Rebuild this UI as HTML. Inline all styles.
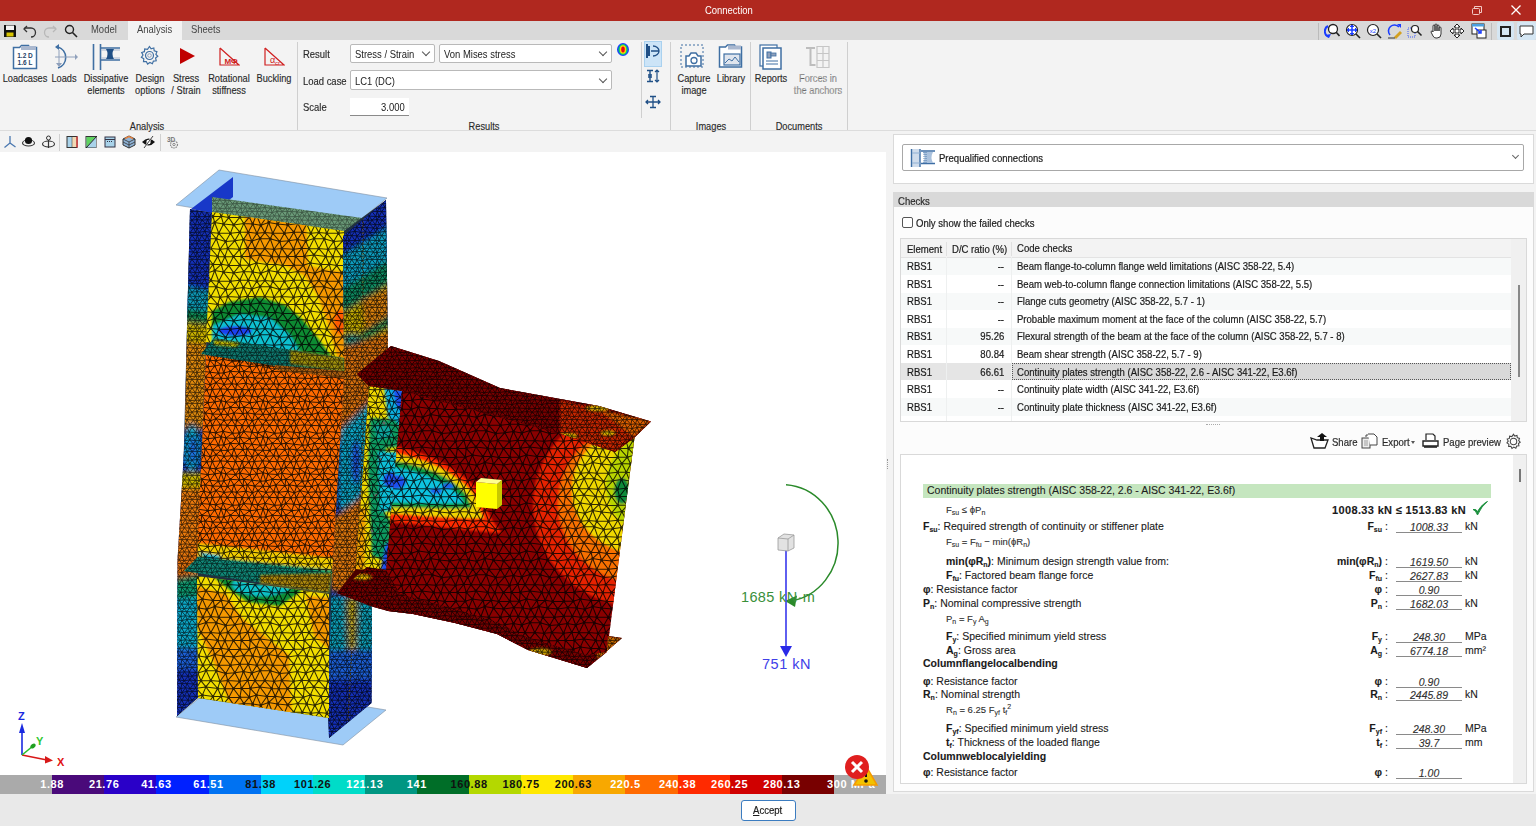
<!DOCTYPE html>
<html><head><meta charset="utf-8">
<style>
*{margin:0;padding:0;box-sizing:border-box}
html,body{width:1536px;height:826px;overflow:hidden;background:#f3f3f3;font-family:"Liberation Sans",sans-serif;font-size:10px;color:#333}
.a{position:absolute}
.t{position:absolute;white-space:nowrap;line-height:1}
#title{left:0;top:0;width:1536px;height:21px;background:#b0281f}
#tabs{left:0;top:21px;width:1536px;height:19px;background:#d9d9d9}
#ribbon{left:0;top:40px;width:1536px;height:91px;background:#f3f3f3;border-bottom:1px solid #dcdcdc}
#tb2{left:0;top:132px;width:886px;height:20px;background:#f3f3f3}
#view{left:0;top:152px;width:886px;height:623px;background:#fff;overflow:hidden}
#legend{left:0;top:775px;width:886px;height:19px;background:#aaa}
#bottom{left:0;top:794px;width:1536px;height:32px;background:#e9e9e9}
.sep{position:absolute;width:1px;background:#cfcfcf}
.lbl{color:#2a2a2a;font-size:10.5px;-webkit-text-stroke:.15px #2a2a2a}
.c{transform:translateX(-50%) scaleX(.88)}
.tx{font-size:10.5px;color:#1a1a1a;-webkit-text-stroke:.2px #1a1a1a;transform:scaleX(.91);transform-origin:0 0}
.lg{top:4px;font-size:11px;font-weight:bold;letter-spacing:.6px;transform:translateX(-50%)}
.rp{font-size:10.5px;color:#1a1a1a;line-height:12px;-webkit-text-stroke:.1px #1a1a1a}
.rp sub{font-size:7px;vertical-align:-2px;line-height:0}
.rp sup{font-size:7px;vertical-align:4px;line-height:0}
.rp.b,.rp b{font-weight:bold}
.rp.i{font-style:italic;color:#333}
.rp.f{font-size:9.5px;color:#333}
.s{transform:scaleX(.9);transform-origin:0 0}
.combo{position:absolute;background:#fff;border:1px solid #b9b9b9;border-radius:2px}
.chev{position:absolute;width:6px;height:6px;border-right:1px solid #555;border-bottom:1px solid #555;transform:rotate(45deg)}
</style></head><body>
<div id="title" class="a"><div class="t s" style="left:705px;top:5px;color:#fff;font-size:10.5px">Connection</div>
<svg class="a" style="left:1470px;top:4px" width="14" height="12"><rect x="2.5" y="4.5" width="7" height="6" rx="1" fill="none" stroke="#f3c9c5" stroke-width="1"/><path d="M4.5 4.5V2.5h7v6h-2" fill="none" stroke="#f3c9c5"/></svg>
<svg class="a" style="left:1510px;top:4px" width="13" height="12"><path d="M1.5 1.5l9 9M10.5 1.5l-9 9" stroke="#fff" stroke-width="1.3"/></svg>
</div>
<div id="tabs" class="a">
 <div class="a" style="left:128px;top:0;width:54px;height:19px;background:#f3f3f3"></div>
 <div class="t s" style="left:91px;top:3px;font-size:10.5px;color:#444">Model</div>
 <div class="t s" style="left:137px;top:3px;font-size:10.5px;color:#444">Analysis</div>
 <div class="t s" style="left:191px;top:3px;font-size:10.5px;color:#444">Sheets</div>

 <svg class="a" style="left:3px;top:3px" width="14" height="14" viewBox="0 0 14 14"><path d="M1 1h11l1 1v11H1z" fill="#111"/><rect x="3" y="1.5" width="8" height="4.5" fill="#f4f4f4"/><rect x="3.5" y="8.5" width="7" height="4" fill="#d8c400"/></svg>
 <svg class="a" style="left:23px;top:3px" width="14" height="14" viewBox="0 0 14 14"><path d="M4 2L1 5l3 3" fill="none" stroke="#333" stroke-width="1.3"/><path d="M1.5 5H8a4.5 4.5 0 0 1 0 9" fill="none" stroke="#333" stroke-width="1.3" transform="translate(0,-1)"/></svg>
 <svg class="a" style="left:43px;top:3px" width="14" height="14" viewBox="0 0 14 14"><path d="M10 2l3 3-3 3" fill="none" stroke="#b8b8b8" stroke-width="1.3"/><path d="M12.5 5H6a4.5 4.5 0 0 0 0 9" fill="none" stroke="#b8b8b8" stroke-width="1.3" transform="translate(0,-1)"/></svg>
 <svg class="a" style="left:64px;top:3px" width="14" height="14" viewBox="0 0 14 14"><circle cx="5.5" cy="5.5" r="4" fill="none" stroke="#222" stroke-width="1.4"/><path d="M8.5 8.5l4.5 4.5" stroke="#222" stroke-width="1.6"/></svg>
 <div class="sep" style="left:1318px;top:2px;height:17px;background:#bbb"></div>
 <svg class="a" style="left:1324px;top:2px" width="16" height="16" viewBox="0 0 16 16"><circle cx="9" cy="6" r="4.5" fill="#fff" stroke="#222" stroke-width="1.3"/><path d="M12 9l3.5 4" stroke="#222" stroke-width="1.6"/><path d="M4 3a6 6 0 0 0 1 11" fill="none" stroke="#1a3cff" stroke-width="2"/><path d="M1 12l4 3 2-4z" fill="#1a3cff"/></svg>
 <svg class="a" style="left:1345px;top:2px" width="16" height="16" viewBox="0 0 16 16"><circle cx="7" cy="7" r="5.5" fill="#fff" stroke="#222" stroke-width="1.2"/><path d="M7 2.5v9M2.5 7h9" stroke="#1a3cff" stroke-width="1.5"/><path d="M5 4l2-2 2 2M5 10l2 2 2-2M4 5l-2 2 2 2M10 5l2 2-2 2" fill="#1a3cff" stroke="#1a3cff"/><path d="M11 11l4 4" stroke="#222" stroke-width="1.6"/></svg>
 <svg class="a" style="left:1366px;top:2px" width="16" height="16" viewBox="0 0 16 16"><circle cx="7" cy="7" r="5.5" fill="#fff" stroke="#222" stroke-width="1.2"/><text x="7" y="9.5" font-size="6" fill="#1a3cff" text-anchor="middle" font-family="Liberation Sans">x2</text><path d="M11 11l4 4" stroke="#222" stroke-width="1.6"/></svg>
 <svg class="a" style="left:1387px;top:2px" width="16" height="16" viewBox="0 0 16 16"><path d="M3 12a6 6 0 1 1 9-8" fill="none" stroke="#1a3cff" stroke-width="1.6"/><path d="M10 1h4v4z" fill="#1a3cff"/><path d="M7 14l6-6 2 2-6 6z" fill="#d4a020"/><path d="M1 15h7" stroke="#333"/></svg>
 <svg class="a" style="left:1407px;top:2px" width="16" height="16" viewBox="0 0 16 16"><rect x="1" y="5" width="7" height="9" fill="none" stroke="#1a3cff" stroke-width=".8" stroke-dasharray="1 1"/><circle cx="8" cy="6" r="3.5" fill="#fff" stroke="#222" stroke-width="1.2"/><path d="M10.5 8.5l4 4" stroke="#222" stroke-width="1.6"/></svg>
 <svg class="a" style="left:1429px;top:2px" width="15" height="16" viewBox="0 0 15 16"><path d="M4 9V3a1 1 0 0 1 2 0v5V2a1 1 0 0 1 2 0v6V3a1 1 0 0 1 2 0v5V5a1 1 0 0 1 2 0v6q0 4-4 4H7q-2 0-3-2L2 9a1 1 0 0 1 2 0z" fill="#fff" stroke="#222" stroke-width=".9"/></svg>
 <svg class="a" style="left:1449px;top:2px" width="16" height="16" viewBox="0 0 16 16"><path d="M8 1l3 3H9v3h3V5l3 3-3 3V9H9v3h2l-3 3-3-3h2V9H4v2L1 8l3-3v2h3V4H5z" fill="#fff" stroke="#222" stroke-width="1"/></svg>
 <svg class="a" style="left:1471px;top:2px" width="16" height="16" viewBox="0 0 16 16"><rect x="1" y="1" width="12" height="10" fill="#fff" stroke="#222"/><rect x="1" y="1" width="12" height="2.5" fill="#4aa0e0"/><rect x="6" y="7" width="9" height="8" fill="#fff" stroke="#222"/><path d="M4 5l6 5M10 7v3H7" fill="none" stroke="#1a3cff" stroke-width="1.5"/></svg>
 <div class="sep" style="left:1491px;top:2px;height:17px;background:#bbb"></div>
 <div class="a" style="left:1497px;top:1px;width:17px;height:18px;background:#d5e6f3;border-radius:2px"></div>
 <div class="a" style="left:1500px;top:5px;width:11px;height:11px;border:2px solid #222"></div>
 <div class="a" style="left:1517px;top:1px;width:19px;height:18px;background:#d5e6f3;border-radius:2px"></div>
 <svg class="a" style="left:1519px;top:4px" width="15" height="13" viewBox="0 0 15 13"><path d="M1 1h13v8H5l-3 3V9H1z" fill="#fff" stroke="#333"/></svg>
</div>
<div id="ribbon" class="a">
 <!-- Analysis group -->
 <svg class="a" style="left:12px;top:4px" width="26" height="26" viewBox="0 0 26 26">
  <path d="M1.5 3.5h6l2 -2h7l1 2h7v21h-23z" fill="#fff" stroke="#3f6fa3" stroke-width="1.5"/>
  <rect x="9" y="2" width="15" height="4" fill="#aab8cf"/>
  <text x="13" y="14" font-size="6.5" font-weight="bold" fill="#1f3f66" text-anchor="middle" font-family="Liberation Sans">1.2 D</text>
  <text x="13" y="21" font-size="6.5" font-weight="bold" fill="#1f3f66" text-anchor="middle" font-family="Liberation Sans">1.6 L</text>
 </svg>
 <div class="t lbl c" style="left:25px;top:33px">Loadcases</div>
 <svg class="a" style="left:54px;top:4px" width="24" height="26" viewBox="0 0 24 26">
  <path d="M4 3a11 11 0 0 1 0 21" fill="none" stroke="#3f6fa3" stroke-width="1.6"/>
  <path d="M1 3l4-3v6z" fill="#3f6fa3"/>
  <path d="M1 13h20M5 6v14" stroke="#8fa0bb" stroke-width="1"/>
  <path d="M21 10l3 3-3 3z" fill="#8fa0bb"/><path d="M2 19h6l-3 4z" fill="#8fa0bb"/>
 </svg>
 <div class="t lbl c" style="left:64.4px;top:33px">Loads</div>
 <svg class="a" style="left:92px;top:3px" width="28" height="28" viewBox="0 0 28 28">
  <path d="M1.5 1v26M8.5 1v26" stroke="#3f6fa3" stroke-width="1.6"/>
  <path d="M9 5h19M9 17h19" stroke="#3f6fa3" stroke-width="1.6"/>
  <path d="M9 7h19M9 15h19" stroke="#aab8cf" stroke-width="1"/>
  <path d="M14 6q3 5 0 10h8q-3-5 0-10z" fill="#1f4f86"/>
 </svg>
 <div class="t lbl c" style="left:105.8px;top:33px">Dissipative</div>
 <div class="t lbl c" style="left:105.8px;top:45px">elements</div>
 <svg class="a" style="left:139px;top:5px" width="21" height="21" viewBox="0 0 21 21">
  <path d="M10.5 1.5l1.6 2.3 2.7-.8.4 2.8 2.7.9-1 2.6 1.9 2-2.2 1.7.6 2.8-2.8.3-1 2.6-2.5-1.3-2.3 1.6-1.3-2.5-2.8.1.3-2.8-2.4-1.5 1.6-2.3-1.3-2.5 2.7-.8.3-2.8 2.8.5z" fill="none" stroke="#3f6fa3" stroke-width="1.2"/>
  <circle cx="10.5" cy="10.5" r="4" fill="none" stroke="#3f6fa3" stroke-width="1.2"/>
  <circle cx="10.5" cy="10.5" r="1.8" fill="none" stroke="#8fa0bb" stroke-width="1"/>
 </svg>
 <div class="t lbl c" style="left:149.7px;top:33px">Design</div>
 <div class="t lbl c" style="left:149.7px;top:45px">options</div>
 <svg class="a" style="left:178px;top:7px" width="18" height="18" viewBox="0 0 18 18"><path d="M2 1l15 8-15 8z" fill="#c00000"/></svg>
 <div class="t lbl c" style="left:186.3px;top:33px">Stress</div>
 <div class="t lbl c" style="left:186.3px;top:45px">/ Strain</div>
 <svg class="a" style="left:218px;top:6px" width="22" height="22" viewBox="0 0 22 22">
  <path d="M2 2v17h19L2 2" fill="none" stroke="#d02020" stroke-width="1.2"/>
  <text x="13" y="18" font-size="8" font-weight="bold" fill="#d02020" text-anchor="middle" font-family="Liberation Sans">MΦ</text>
 </svg>
 <div class="t lbl c" style="left:228.7px;top:33px">Rotational</div>
 <div class="t lbl c" style="left:228.7px;top:45px">stiffness</div>
 <svg class="a" style="left:263px;top:6px" width="22" height="22" viewBox="0 0 22 22">
  <path d="M2 2v17h19L2 2" fill="none" stroke="#d02020" stroke-width="1.2"/>
  <text x="12" y="17" font-size="9" fill="#d02020" text-anchor="middle" font-family="Liberation Sans">α<tspan font-size="6" dy="2">cr</tspan></text>
 </svg>
 <div class="t lbl c" style="left:274.4px;top:33px">Buckling</div>
 <div class="t lbl c" style="left:147.3px;top:81px">Analysis</div>
 <div class="sep" style="left:297px;top:2px;height:88px"></div>
 <!-- Results group -->
 <div class="t lbl s" style="left:303px;top:9px">Result</div>
 <div class="combo" style="left:350px;top:4px;width:85px;height:19px"><div class="t s" style="left:4px;top:4px;color:#222;font-size:10.5px">Stress / Strain</div><div class="chev" style="left:72px;top:4px"></div></div>
 <div class="combo" style="left:439px;top:4px;width:173px;height:19px"><div class="t s" style="left:4px;top:4px;color:#222;font-size:10.5px">Von Mises stress</div><div class="chev" style="left:160px;top:4px"></div></div>
 <svg class="a" style="left:617px;top:3px" width="12" height="13" viewBox="0 0 12 13"><ellipse cx="6" cy="6.5" rx="6" ry="6.5" fill="#1e3cff"/><ellipse cx="6" cy="6.5" rx="4.6" ry="5.4" fill="#00d26a"/><ellipse cx="6" cy="6.5" rx="3.2" ry="4.2" fill="#ffd800"/><ellipse cx="6" cy="6.5" rx="1.8" ry="3" fill="#e8001c"/></svg>
 <div class="t lbl s" style="left:303px;top:36px">Load case</div>
 <div class="combo" style="left:350px;top:30px;width:262px;height:20px"><div class="t s" style="left:4px;top:5px;color:#222;font-size:10.5px">LC1 (DC)</div><div class="chev" style="left:249px;top:5px"></div></div>
 <div class="t lbl s" style="left:303px;top:62px">Scale</div>
 <div class="a" style="left:350px;top:58px;width:59px;height:18px;background:#fff;border-bottom:1px solid #8a8a8a"></div>
 <div class="t s" style="left:381px;top:62px;color:#222;font-size:10.5px">3.000</div>
 <div class="t lbl c" style="left:484px;top:81px">Results</div>
 <div class="sep" style="left:641px;top:2px;height:76px"></div>
 <div class="a" style="left:644px;top:1px;width:18px;height:26px;background:#cce4f7;border:1px solid #a9d1ef"></div>
 <svg class="a" style="left:645px;top:3px" width="16" height="16" viewBox="0 0 16 16"><path d="M2 1v14M4 3v10" stroke="#1f4f86" stroke-width="2"/><path d="M6 8h8M8 3a6 5 0 0 1 0 10" fill="none" stroke="#1f4f86" stroke-width="1.3"/></svg>
 <svg class="a" style="left:645px;top:29px" width="16" height="14" viewBox="0 0 16 14"><path d="M2 1.5h6M2 12.5h6M5 1.5v11M3 6h4M3 8h4" stroke="#1f4f86" stroke-width="1.4" fill="none"/><path d="M12 1v12M10 3l2-2 2 2M10 11l2 2 2-2" stroke="#1f4f86" stroke-width="1.2" fill="none"/></svg>
 <svg class="a" style="left:645px;top:55px" width="16" height="14" viewBox="0 0 16 14"><path d="M5 1.5h6M5 12.5h6M8 1.5v11M1 7h14M3 5l-2 2 2 2M13 5l2 2-2 2" stroke="#1f4f86" stroke-width="1.3" fill="none"/></svg>
 <div class="sep" style="left:670px;top:2px;height:88px"></div>
 <!-- Images -->
 <svg class="a" style="left:680px;top:4px" width="26" height="25" viewBox="0 0 26 25">
  <rect x="1" y="1" width="22" height="22" fill="none" stroke="#3f6fa3" stroke-dasharray="2 2"/>
  <path d="M6 12h3l2-3h5l2 3h3v10H6z" fill="#fff" stroke="#3f6fa3" stroke-width="1.5"/><circle cx="14" cy="16.5" r="3" fill="none" stroke="#3f6fa3" stroke-width="1.3"/>
 </svg>
 <div class="t lbl c" style="left:693.5px;top:33px">Capture</div>
 <div class="t lbl c" style="left:693.5px;top:45px">image</div>
 <svg class="a" style="left:718px;top:4px" width="26" height="25" viewBox="0 0 26 25">
  <path d="M1.5 3h6l2-2h7l1 2h6v20h-22z" fill="#fff" stroke="#3f6fa3" stroke-width="1.5"/>
  <rect x="10" y="1.5" width="13" height="4" fill="#aab8cf"/>
  <rect x="6" y="10" width="16" height="11" fill="#dfe5ee" stroke="#3f6fa3" stroke-width="1.2"/><path d="M7 19l4-4 3 2 3-4 4 5" fill="none" stroke="#3f6fa3"/>
 </svg>
 <div class="t lbl c" style="left:730.5px;top:33px">Library</div>
 <div class="t lbl c" style="left:710.5px;top:81px">Images</div>
 <div class="sep" style="left:750px;top:2px;height:88px"></div>
 <svg class="a" style="left:759px;top:4px" width="24" height="26" viewBox="0 0 24 26">
  <rect x="1" y="1" width="17" height="21" fill="#fff" stroke="#3f6fa3" stroke-width="1.2"/>
  <rect x="4" y="4" width="18" height="21" fill="#fff" stroke="#3f6fa3" stroke-width="1.5"/>
  <rect x="8" y="8" width="4" height="6" fill="#8fa0bb" stroke="#3f6fa3"/><rect x="12" y="9" width="5" height="3" fill="#8fa0bb" stroke="#3f6fa3" stroke-width=".8"/>
  <path d="M7 17h12M7 20h12" stroke="#3f6fa3"/>
 </svg>
 <div class="t lbl c" style="left:771px;top:33px">Reports</div>
 <svg class="a" style="left:805px;top:5px" width="26" height="24" viewBox="0 0 26 24">
  <path d="M1 3h9M5.5 3v17h5" fill="none" stroke="#bdbdbd" stroke-width="2"/>
  <path d="M12 1.5h12v21H12zM12 8.5h12M12 15.5h12M18 1.5v21" fill="none" stroke="#c6c6c6" stroke-width="1.2"/>
 </svg>
 <div class="t lbl c" style="left:817.5px;top:33px;color:#a8a8a8">Forces in</div>
 <div class="t lbl c" style="left:817.5px;top:45px;color:#a8a8a8">the anchors</div>
 <div class="t lbl c" style="left:798.5px;top:81px">Documents</div>
 <div class="sep" style="left:847px;top:2px;height:88px"></div>
</div>
<div id="tb2" class="a">
 <svg class="a" style="left:3px;top:3px" width="14" height="14" viewBox="0 0 14 14"><path d="M7 1v7L1.5 12.5M7 8l5.5 4" fill="none" stroke="#4a78b0" stroke-width="1.3"/></svg>
 <svg class="a" style="left:21px;top:3px" width="15" height="14" viewBox="0 0 15 14"><ellipse cx="7.5" cy="8" rx="6" ry="3" fill="none" stroke="#333" stroke-width="1.1"/><circle cx="7.5" cy="5.5" r="3.6" fill="#111"/></svg>
 <svg class="a" style="left:41px;top:3px" width="15" height="14" viewBox="0 0 15 14"><ellipse cx="7.5" cy="9" rx="6" ry="3" fill="none" stroke="#333" stroke-width="1.1"/><circle cx="7.5" cy="3" r="2" fill="none" stroke="#333"/><path d="M7.5 5v8" stroke="#333" stroke-width="1.2"/></svg>
 <div class="sep" style="left:59px;top:2px;height:17px;background:#d0d0d0"></div>
 <svg class="a" style="left:66px;top:3px" width="12" height="14" viewBox="0 0 12 14"><rect x="1" y="1.5" width="10" height="11" fill="#a9d3ea" stroke="#333"/><rect x="6" y="2" width="4.5" height="10" fill="#f0d9b5"/><path d="M11 1.5v11" stroke="#e02020" stroke-width="1.2"/><path d="M6 1.5v11" stroke="#333" stroke-dasharray="1 1"/></svg>
 <svg class="a" style="left:85px;top:3px" width="12" height="14" viewBox="0 0 12 14"><rect x="1" y="1.5" width="10" height="11" fill="#a9d3ea" stroke="#333"/><path d="M1.5 12.5L11 2v10.5z" fill="#a9d3ea"/><path d="M1.5 2v10L10.5 2z" fill="#5fd35f"/><path d="M1 13L12 1" stroke="#222" stroke-width="1"/></svg>
 <svg class="a" style="left:104px;top:3px" width="12" height="14" viewBox="0 0 12 14"><rect x="1" y="2" width="10" height="10" fill="#a9d3ea" stroke="#334"/><path d="M1 4.5h10" stroke="#334"/><path d="M3 6.5h6" stroke="#334" stroke-dasharray="1 1"/></svg>
 <svg class="a" style="left:122px;top:3px" width="14" height="14" viewBox="0 0 14 14"><path d="M7 1l6 3v6l-6 3-6-3V4z" fill="#8fb3d6" stroke="#333"/><path d="M1 4l6 3 6-3M7 7v6M1 7l6 3 6-3" fill="none" stroke="#333" stroke-width=".8"/><path d="M3 3.5l4-2 4 2" stroke="#e08040" stroke-width="1.5" fill="none"/></svg>
 <svg class="a" style="left:141px;top:3px" width="15" height="14" viewBox="0 0 15 14"><path d="M1 7q6.5-7 13 0q-6.5 7-13 0z" fill="#111"/><circle cx="7.5" cy="7" r="2.2" fill="#fff"/><path d="M3 13L12 1" stroke="#f3f3f3" stroke-width="1.5"/><path d="M3 13L12 1" stroke="#111" stroke-width=".8"/></svg>
 <div class="sep" style="left:160px;top:2px;height:17px;background:#d0d0d0"></div>
 <svg class="a" style="left:166px;top:3px" width="14" height="14" viewBox="0 0 14 14"><text x="1" y="6.5" font-size="6.5" font-weight="bold" fill="#777" font-family="Liberation Sans">3D</text><circle cx="8" cy="9.5" r="3.5" fill="none" stroke="#888" stroke-width="1.2" stroke-dasharray="1.5 .8"/><circle cx="8" cy="9.5" r="1.2" fill="none" stroke="#888"/></svg>
</div>
<div id="view" class="a"></div>
<!--MODEL--><svg class="a" style="left:0;top:152px" width="886" height="623" viewBox="0 152 886 623"><defs>
 <pattern id="mesh" width="42" height="36" patternUnits="userSpaceOnUse"><path d="M-3.3 -6.1L2.3 -6.5M-3.3 -6.1L-8.2 -0.4M-3.3 -6.1L-0.1 0.2M2.3 -6.5L10.6 -7.1M2.3 -6.5L-0.1 0.2M2.3 -6.5L5.8 0.8M10.6 -7.1L17.4 -6.6M10.6 -7.1L5.8 0.8M10.6 -7.1L13.1 -0.7M17.4 -6.6L25.5 -6.3M17.4 -6.6L13.1 -0.7M17.4 -6.6L22.5 1.3M25.5 -6.3L32.3 -6.6M25.5 -6.3L22.5 1.3M25.5 -6.3L29.4 0.9M32.3 -6.6L38.7 -6.1M32.3 -6.6L29.4 0.9M32.3 -6.6L33.8 -0.4M38.7 -6.1L44.3 -6.5M38.7 -6.1L33.8 -0.4M38.7 -6.1L41.9 0.2M44.3 -6.5L52.6 -7.1M44.3 -6.5L41.9 0.2M44.3 -6.5L47.8 0.8M-8.2 -0.4L-0.1 0.2M-8.2 -0.4L-2.1 6.7M-8.2 -0.4L-12.0 5.2M-0.1 0.2L5.8 0.8M-0.1 0.2L4.8 5.9M-0.1 0.2L-2.1 6.7M5.8 0.8L13.1 -0.7M5.8 0.8L11.1 4.8M5.8 0.8L4.8 5.9M13.1 -0.7L22.5 1.3M13.1 -0.7L16.1 5.9M13.1 -0.7L11.1 4.8M22.5 1.3L29.4 0.9M22.5 1.3L25.5 6.5M22.5 1.3L16.1 5.9M29.4 0.9L33.8 -0.4M29.4 0.9L30.0 5.2M29.4 0.9L25.5 6.5M33.8 -0.4L41.9 0.2M33.8 -0.4L39.9 6.7M33.8 -0.4L30.0 5.2M41.9 0.2L47.8 0.8M41.9 0.2L46.8 5.9M41.9 0.2L39.9 6.7M-2.1 6.7L4.8 5.9M-2.1 6.7L-8.1 11.3M-2.1 6.7L0.0 12.2M4.8 5.9L11.1 4.8M4.8 5.9L0.0 12.2M4.8 5.9L8.4 13.2M11.1 4.8L16.1 5.9M11.1 4.8L8.4 13.2M11.1 4.8L13.8 12.9M16.1 5.9L25.5 6.5M16.1 5.9L13.8 12.9M16.1 5.9L20.4 11.3M25.5 6.5L30.0 5.2M25.5 6.5L20.4 11.3M25.5 6.5L29.2 11.9M30.0 5.2L39.9 6.7M30.0 5.2L29.2 11.9M30.0 5.2L33.9 11.3M39.9 6.7L46.8 5.9M39.9 6.7L33.9 11.3M39.9 6.7L42.0 12.2M46.8 5.9L53.1 4.8M46.8 5.9L42.0 12.2M46.8 5.9L50.4 13.2M-8.1 11.3L0.0 12.2M-8.1 11.3L-4.7 16.9M-8.1 11.3L-9.1 17.7M0.0 12.2L8.4 13.2M0.0 12.2L2.6 18.0M0.0 12.2L-4.7 16.9M8.4 13.2L13.8 12.9M8.4 13.2L11.0 18.3M8.4 13.2L2.6 18.0M13.8 12.9L20.4 11.3M13.8 12.9L17.6 18.4M13.8 12.9L11.0 18.3M20.4 11.3L29.2 11.9M20.4 11.3L23.9 16.9M20.4 11.3L17.6 18.4M29.2 11.9L33.9 11.3M29.2 11.9L32.9 17.7M29.2 11.9L23.9 16.9M33.9 11.3L42.0 12.2M33.9 11.3L37.3 16.9M33.9 11.3L32.9 17.7M42.0 12.2L50.4 13.2M42.0 12.2L44.6 18.0M42.0 12.2L37.3 16.9M-4.7 16.9L2.6 18.0M-4.7 16.9L-6.1 23.2M-4.7 16.9L0.4 24.8M2.6 18.0L11.0 18.3M2.6 18.0L0.4 24.8M2.6 18.0L6.0 22.7M11.0 18.3L17.6 18.4M11.0 18.3L6.0 22.7M11.0 18.3L14.0 24.4M17.6 18.4L23.9 16.9M17.6 18.4L14.0 24.4M17.6 18.4L21.8 23.7M23.9 16.9L32.9 17.7M23.9 16.9L21.8 23.7M23.9 16.9L26.7 24.3M32.9 17.7L37.3 16.9M32.9 17.7L26.7 24.3M32.9 17.7L35.9 23.2M37.3 16.9L44.6 18.0M37.3 16.9L35.9 23.2M37.3 16.9L42.4 24.8M44.6 18.0L53.0 18.3M44.6 18.0L42.4 24.8M44.6 18.0L48.0 22.7M-6.1 23.2L0.4 24.8M-6.1 23.2L-3.3 29.9M-6.1 23.2L-9.7 29.4M0.4 24.8L6.0 22.7M0.4 24.8L2.3 29.5M0.4 24.8L-3.3 29.9M6.0 22.7L14.0 24.4M6.0 22.7L10.6 28.9M6.0 22.7L2.3 29.5M14.0 24.4L21.8 23.7M14.0 24.4L17.4 29.4M14.0 24.4L10.6 28.9M21.8 23.7L26.7 24.3M21.8 23.7L25.5 29.7M21.8 23.7L17.4 29.4M26.7 24.3L35.9 23.2M26.7 24.3L32.3 29.4M26.7 24.3L25.5 29.7M35.9 23.2L42.4 24.8M35.9 23.2L38.7 29.9M35.9 23.2L32.3 29.4M42.4 24.8L48.0 22.7M42.4 24.8L44.3 29.5M42.4 24.8L38.7 29.9M-3.3 29.9L2.3 29.5M-3.3 29.9L-8.2 35.6M-3.3 29.9L-0.1 36.2M2.3 29.5L10.6 28.9M2.3 29.5L-0.1 36.2M2.3 29.5L5.8 36.8M10.6 28.9L17.4 29.4M10.6 28.9L5.8 36.8M10.6 28.9L13.1 35.3M17.4 29.4L25.5 29.7M17.4 29.4L13.1 35.3M17.4 29.4L22.5 37.3M25.5 29.7L32.3 29.4M25.5 29.7L22.5 37.3M25.5 29.7L29.4 36.9M32.3 29.4L38.7 29.9M32.3 29.4L29.4 36.9M32.3 29.4L33.8 35.6M38.7 29.9L44.3 29.5M38.7 29.9L33.8 35.6M38.7 29.9L41.9 36.2M44.3 29.5L52.6 28.9M44.3 29.5L41.9 36.2M44.3 29.5L47.8 36.8M-8.2 35.6L-0.1 36.2M-8.2 35.6L-2.1 42.7M-8.2 35.6L-12.0 41.2M-0.1 36.2L5.8 36.8M-0.1 36.2L4.8 41.9M-0.1 36.2L-2.1 42.7M5.8 36.8L13.1 35.3M5.8 36.8L11.1 40.8M5.8 36.8L4.8 41.9M13.1 35.3L22.5 37.3M13.1 35.3L16.1 41.9M13.1 35.3L11.1 40.8M22.5 37.3L29.4 36.9M22.5 37.3L25.5 42.5M22.5 37.3L16.1 41.9M29.4 36.9L33.8 35.6M29.4 36.9L30.0 41.2M29.4 36.9L25.5 42.5M33.8 35.6L41.9 36.2M33.8 35.6L39.9 42.7M33.8 35.6L30.0 41.2M41.9 36.2L47.8 36.8M41.9 36.2L46.8 41.9M41.9 36.2L39.9 42.7" stroke="#000" stroke-width="1.0" fill="none"/><path d="M-4.6 -6.1a1.25 1.25 0 1 0 2.5 0a1.25 1.25 0 1 0 -2.5 0M1.0 -6.5a1.25 1.25 0 1 0 2.5 0a1.25 1.25 0 1 0 -2.5 0M9.3 -7.1a1.25 1.25 0 1 0 2.5 0a1.25 1.25 0 1 0 -2.5 0M16.1 -6.6a1.25 1.25 0 1 0 2.5 0a1.25 1.25 0 1 0 -2.5 0M24.3 -6.3a1.25 1.25 0 1 0 2.5 0a1.25 1.25 0 1 0 -2.5 0M31.1 -6.6a1.25 1.25 0 1 0 2.5 0a1.25 1.25 0 1 0 -2.5 0M37.4 -6.1a1.25 1.25 0 1 0 2.5 0a1.25 1.25 0 1 0 -2.5 0M43.0 -6.5a1.25 1.25 0 1 0 2.5 0a1.25 1.25 0 1 0 -2.5 0M-9.5 -0.4a1.25 1.25 0 1 0 2.5 0a1.25 1.25 0 1 0 -2.5 0M-1.4 0.2a1.25 1.25 0 1 0 2.5 0a1.25 1.25 0 1 0 -2.5 0M4.5 0.8a1.25 1.25 0 1 0 2.5 0a1.25 1.25 0 1 0 -2.5 0M11.8 -0.7a1.25 1.25 0 1 0 2.5 0a1.25 1.25 0 1 0 -2.5 0M21.2 1.3a1.25 1.25 0 1 0 2.5 0a1.25 1.25 0 1 0 -2.5 0M28.1 0.9a1.25 1.25 0 1 0 2.5 0a1.25 1.25 0 1 0 -2.5 0M32.5 -0.4a1.25 1.25 0 1 0 2.5 0a1.25 1.25 0 1 0 -2.5 0M40.6 0.2a1.25 1.25 0 1 0 2.5 0a1.25 1.25 0 1 0 -2.5 0M-3.4 6.7a1.25 1.25 0 1 0 2.5 0a1.25 1.25 0 1 0 -2.5 0M3.5 5.9a1.25 1.25 0 1 0 2.5 0a1.25 1.25 0 1 0 -2.5 0M9.8 4.8a1.25 1.25 0 1 0 2.5 0a1.25 1.25 0 1 0 -2.5 0M14.8 5.9a1.25 1.25 0 1 0 2.5 0a1.25 1.25 0 1 0 -2.5 0M24.3 6.5a1.25 1.25 0 1 0 2.5 0a1.25 1.25 0 1 0 -2.5 0M28.8 5.2a1.25 1.25 0 1 0 2.5 0a1.25 1.25 0 1 0 -2.5 0M38.6 6.7a1.25 1.25 0 1 0 2.5 0a1.25 1.25 0 1 0 -2.5 0M45.5 5.9a1.25 1.25 0 1 0 2.5 0a1.25 1.25 0 1 0 -2.5 0M-9.4 11.3a1.25 1.25 0 1 0 2.5 0a1.25 1.25 0 1 0 -2.5 0M-1.2 12.2a1.25 1.25 0 1 0 2.5 0a1.25 1.25 0 1 0 -2.5 0M7.2 13.2a1.25 1.25 0 1 0 2.5 0a1.25 1.25 0 1 0 -2.5 0M12.6 12.9a1.25 1.25 0 1 0 2.5 0a1.25 1.25 0 1 0 -2.5 0M19.2 11.3a1.25 1.25 0 1 0 2.5 0a1.25 1.25 0 1 0 -2.5 0M28.0 11.9a1.25 1.25 0 1 0 2.5 0a1.25 1.25 0 1 0 -2.5 0M32.6 11.3a1.25 1.25 0 1 0 2.5 0a1.25 1.25 0 1 0 -2.5 0M40.8 12.2a1.25 1.25 0 1 0 2.5 0a1.25 1.25 0 1 0 -2.5 0M-5.9 16.9a1.25 1.25 0 1 0 2.5 0a1.25 1.25 0 1 0 -2.5 0M1.3 18.0a1.25 1.25 0 1 0 2.5 0a1.25 1.25 0 1 0 -2.5 0M9.7 18.3a1.25 1.25 0 1 0 2.5 0a1.25 1.25 0 1 0 -2.5 0M16.3 18.4a1.25 1.25 0 1 0 2.5 0a1.25 1.25 0 1 0 -2.5 0M22.6 16.9a1.25 1.25 0 1 0 2.5 0a1.25 1.25 0 1 0 -2.5 0M31.7 17.7a1.25 1.25 0 1 0 2.5 0a1.25 1.25 0 1 0 -2.5 0M36.1 16.9a1.25 1.25 0 1 0 2.5 0a1.25 1.25 0 1 0 -2.5 0M43.3 18.0a1.25 1.25 0 1 0 2.5 0a1.25 1.25 0 1 0 -2.5 0M-7.4 23.2a1.25 1.25 0 1 0 2.5 0a1.25 1.25 0 1 0 -2.5 0M-0.9 24.8a1.25 1.25 0 1 0 2.5 0a1.25 1.25 0 1 0 -2.5 0M4.7 22.7a1.25 1.25 0 1 0 2.5 0a1.25 1.25 0 1 0 -2.5 0M12.7 24.4a1.25 1.25 0 1 0 2.5 0a1.25 1.25 0 1 0 -2.5 0M20.5 23.7a1.25 1.25 0 1 0 2.5 0a1.25 1.25 0 1 0 -2.5 0M25.5 24.3a1.25 1.25 0 1 0 2.5 0a1.25 1.25 0 1 0 -2.5 0M34.6 23.2a1.25 1.25 0 1 0 2.5 0a1.25 1.25 0 1 0 -2.5 0M41.1 24.8a1.25 1.25 0 1 0 2.5 0a1.25 1.25 0 1 0 -2.5 0M-4.6 29.9a1.25 1.25 0 1 0 2.5 0a1.25 1.25 0 1 0 -2.5 0M1.0 29.5a1.25 1.25 0 1 0 2.5 0a1.25 1.25 0 1 0 -2.5 0M9.3 28.9a1.25 1.25 0 1 0 2.5 0a1.25 1.25 0 1 0 -2.5 0M16.1 29.4a1.25 1.25 0 1 0 2.5 0a1.25 1.25 0 1 0 -2.5 0M24.3 29.7a1.25 1.25 0 1 0 2.5 0a1.25 1.25 0 1 0 -2.5 0M31.1 29.4a1.25 1.25 0 1 0 2.5 0a1.25 1.25 0 1 0 -2.5 0M37.4 29.9a1.25 1.25 0 1 0 2.5 0a1.25 1.25 0 1 0 -2.5 0M43.0 29.5a1.25 1.25 0 1 0 2.5 0a1.25 1.25 0 1 0 -2.5 0M-9.5 35.6a1.25 1.25 0 1 0 2.5 0a1.25 1.25 0 1 0 -2.5 0M-1.4 36.2a1.25 1.25 0 1 0 2.5 0a1.25 1.25 0 1 0 -2.5 0M4.5 36.8a1.25 1.25 0 1 0 2.5 0a1.25 1.25 0 1 0 -2.5 0M11.8 35.3a1.25 1.25 0 1 0 2.5 0a1.25 1.25 0 1 0 -2.5 0M21.2 37.3a1.25 1.25 0 1 0 2.5 0a1.25 1.25 0 1 0 -2.5 0M28.1 36.9a1.25 1.25 0 1 0 2.5 0a1.25 1.25 0 1 0 -2.5 0M32.5 35.6a1.25 1.25 0 1 0 2.5 0a1.25 1.25 0 1 0 -2.5 0M40.6 36.2a1.25 1.25 0 1 0 2.5 0a1.25 1.25 0 1 0 -2.5 0" fill="#000"/></pattern>
<pattern id="meshs" width="30" height="24" patternUnits="userSpaceOnUse"><path d="M-3.1 -4.2L2.1 -3.4M-3.1 -4.2L-4.9 0.6M-3.1 -4.2L-0.6 0.4M2.1 -3.4L7.1 -4.7M2.1 -3.4L-0.6 0.4M2.1 -3.4L4.4 -0.2M7.1 -4.7L11.9 -4.6M7.1 -4.7L4.4 -0.2M7.1 -4.7L9.2 0.1M11.9 -4.6L17.3 -4.6M11.9 -4.6L9.2 0.1M11.9 -4.6L15.8 0.5M17.3 -4.6L21.6 -4.4M17.3 -4.6L15.8 0.5M17.3 -4.6L19.1 0.7M21.6 -4.4L26.9 -4.2M21.6 -4.4L19.1 0.7M21.6 -4.4L25.1 0.6M26.9 -4.2L32.1 -3.4M26.9 -4.2L25.1 0.6M26.9 -4.2L29.4 0.4M32.1 -3.4L37.1 -4.7M32.1 -3.4L29.4 0.4M32.1 -3.4L34.4 -0.2M-4.9 0.6L-0.6 0.4M-4.9 0.6L-2.3 3.6M-4.9 0.6L-8.0 4.3M-0.6 0.4L4.4 -0.2M-0.6 0.4L1.8 4.2M-0.6 0.4L-2.3 3.6M4.4 -0.2L9.2 0.1M4.4 -0.2L8.2 4.2M4.4 -0.2L1.8 4.2M9.2 0.1L15.8 0.5M9.2 0.1L12.0 4.2M9.2 0.1L8.2 4.2M15.8 0.5L19.1 0.7M15.8 0.5L17.0 3.5M15.8 0.5L12.0 4.2M19.1 0.7L25.1 0.6M19.1 0.7L22.0 4.3M19.1 0.7L17.0 3.5M25.1 0.6L29.4 0.4M25.1 0.6L27.7 3.6M25.1 0.6L22.0 4.3M29.4 0.4L34.4 -0.2M29.4 0.4L31.8 4.2M29.4 0.4L27.7 3.6M-2.3 3.6L1.8 4.2M-2.3 3.6L-4.2 7.5M-2.3 3.6L-0.8 7.9M1.8 4.2L8.2 4.2M1.8 4.2L-0.8 7.9M1.8 4.2L4.2 8.8M8.2 4.2L12.0 4.2M8.2 4.2L4.2 8.8M8.2 4.2L9.7 7.9M12.0 4.2L17.0 3.5M12.0 4.2L9.7 7.9M12.0 4.2L15.5 8.7M17.0 3.5L22.0 4.3M17.0 3.5L15.5 8.7M17.0 3.5L19.5 8.5M22.0 4.3L27.7 3.6M22.0 4.3L19.5 8.5M22.0 4.3L25.8 7.5M27.7 3.6L31.8 4.2M27.7 3.6L25.8 7.5M27.7 3.6L29.2 7.9M31.8 4.2L38.2 4.2M31.8 4.2L29.2 7.9M31.8 4.2L34.2 8.8M-4.2 7.5L-0.8 7.9M-4.2 7.5L-3.5 11.6M-4.2 7.5L-7.3 11.7M-0.8 7.9L4.2 8.8M-0.8 7.9L1.9 11.6M-0.8 7.9L-3.5 11.6M4.2 8.8L9.7 7.9M4.2 8.8L6.9 11.6M4.2 8.8L1.9 11.6M9.7 7.9L15.5 8.7M9.7 7.9L13.4 12.0M9.7 7.9L6.9 11.6M15.5 8.7L19.5 8.5M15.5 8.7L16.9 12.7M15.5 8.7L13.4 12.0M19.5 8.5L25.8 7.5M19.5 8.5L22.7 11.7M19.5 8.5L16.9 12.7M25.8 7.5L29.2 7.9M25.8 7.5L26.5 11.6M25.8 7.5L22.7 11.7M29.2 7.9L34.2 8.8M29.2 7.9L31.9 11.6M29.2 7.9L26.5 11.6M-3.5 11.6L1.9 11.6M-3.5 11.6L-5.1 15.3M-3.5 11.6L0.9 16.5M1.9 11.6L6.9 11.6M1.9 11.6L0.9 16.5M1.9 11.6L5.5 15.7M6.9 11.6L13.4 12.0M6.9 11.6L5.5 15.7M6.9 11.6L10.1 16.6M13.4 12.0L16.9 12.7M13.4 12.0L10.1 16.6M13.4 12.0L15.8 16.2M16.9 12.7L22.7 11.7M16.9 12.7L15.8 16.2M16.9 12.7L19.4 16.4M22.7 11.7L26.5 11.6M22.7 11.7L19.4 16.4M22.7 11.7L24.9 15.3M26.5 11.6L31.9 11.6M26.5 11.6L24.9 15.3M26.5 11.6L30.9 16.5M31.9 11.6L36.9 11.6M31.9 11.6L30.9 16.5M31.9 11.6L35.5 15.7M-5.1 15.3L0.9 16.5M-5.1 15.3L-3.1 19.8M-5.1 15.3L-8.4 19.6M0.9 16.5L5.5 15.7M0.9 16.5L2.1 20.6M0.9 16.5L-3.1 19.8M5.5 15.7L10.1 16.6M5.5 15.7L7.1 19.3M5.5 15.7L2.1 20.6M10.1 16.6L15.8 16.2M10.1 16.6L11.9 19.4M10.1 16.6L7.1 19.3M15.8 16.2L19.4 16.4M15.8 16.2L17.3 19.4M15.8 16.2L11.9 19.4M19.4 16.4L24.9 15.3M19.4 16.4L21.6 19.6M19.4 16.4L17.3 19.4M24.9 15.3L30.9 16.5M24.9 15.3L26.9 19.8M24.9 15.3L21.6 19.6M30.9 16.5L35.5 15.7M30.9 16.5L32.1 20.6M30.9 16.5L26.9 19.8M-3.1 19.8L2.1 20.6M-3.1 19.8L-4.9 24.6M-3.1 19.8L-0.6 24.4M2.1 20.6L7.1 19.3M2.1 20.6L-0.6 24.4M2.1 20.6L4.4 23.8M7.1 19.3L11.9 19.4M7.1 19.3L4.4 23.8M7.1 19.3L9.2 24.1M11.9 19.4L17.3 19.4M11.9 19.4L9.2 24.1M11.9 19.4L15.8 24.5M17.3 19.4L21.6 19.6M17.3 19.4L15.8 24.5M17.3 19.4L19.1 24.7M21.6 19.6L26.9 19.8M21.6 19.6L19.1 24.7M21.6 19.6L25.1 24.6M26.9 19.8L32.1 20.6M26.9 19.8L25.1 24.6M26.9 19.8L29.4 24.4M32.1 20.6L37.1 19.3M32.1 20.6L29.4 24.4M32.1 20.6L34.4 23.8M-4.9 24.6L-0.6 24.4M-4.9 24.6L-2.3 27.6M-4.9 24.6L-8.0 28.3M-0.6 24.4L4.4 23.8M-0.6 24.4L1.8 28.2M-0.6 24.4L-2.3 27.6M4.4 23.8L9.2 24.1M4.4 23.8L8.2 28.2M4.4 23.8L1.8 28.2M9.2 24.1L15.8 24.5M9.2 24.1L12.0 28.2M9.2 24.1L8.2 28.2M15.8 24.5L19.1 24.7M15.8 24.5L17.0 27.5M15.8 24.5L12.0 28.2M19.1 24.7L25.1 24.6M19.1 24.7L22.0 28.3M19.1 24.7L17.0 27.5M25.1 24.6L29.4 24.4M25.1 24.6L27.7 27.6M25.1 24.6L22.0 28.3M29.4 24.4L34.4 23.8M29.4 24.4L31.8 28.2M29.4 24.4L27.7 27.6" stroke="#000" stroke-width="0.85" fill="none"/></pattern>
<pattern id="meshb" width="54" height="48" patternUnits="userSpaceOnUse"><path d="M-5.1 -7.5L2.8 -6.7M-5.1 -7.5L-9.9 -1.6M-5.1 -7.5L0.3 -1.2M2.8 -6.7L14.4 -6.7M2.8 -6.7L0.3 -1.2M2.8 -6.7L9.7 1.5M14.4 -6.7L23.8 -7.8M14.4 -6.7L9.7 1.5M14.4 -6.7L18.9 0.7M23.8 -7.8L32.3 -7.7M23.8 -7.8L18.9 0.7M23.8 -7.8L27.4 -0.4M32.3 -7.7L40.9 -6.7M32.3 -7.7L27.4 -0.4M32.3 -7.7L35.8 1.1M40.9 -6.7L48.9 -7.5M40.9 -6.7L35.8 1.1M40.9 -6.7L44.1 -1.6M48.9 -7.5L56.8 -6.7M48.9 -7.5L44.1 -1.6M48.9 -7.5L54.3 -1.2M56.8 -6.7L68.4 -6.7M56.8 -6.7L54.3 -1.2M56.8 -6.7L63.7 1.5M-9.9 -1.6L0.3 -1.2M-9.9 -1.6L-5.2 8.6M-9.9 -1.6L-15.0 8.8M0.3 -1.2L9.7 1.5M0.3 -1.2L4.0 9.3M0.3 -1.2L-5.2 8.6M9.7 1.5L18.9 0.7M9.7 1.5L11.8 8.4M9.7 1.5L4.0 9.3M18.9 0.7L27.4 -0.4M18.9 0.7L23.6 9.3M18.9 0.7L11.8 8.4M27.4 -0.4L35.8 1.1M27.4 -0.4L31.8 8.3M27.4 -0.4L23.6 9.3M35.8 1.1L44.1 -1.6M35.8 1.1L39.0 8.8M35.8 1.1L31.8 8.3M44.1 -1.6L54.3 -1.2M44.1 -1.6L48.8 8.6M44.1 -1.6L39.0 8.8M54.3 -1.2L63.7 1.5M54.3 -1.2L58.0 9.3M54.3 -1.2L48.8 8.6M-5.2 8.6L4.0 9.3M-5.2 8.6L-10.1 14.9M-5.2 8.6L1.7 16.5M4.0 9.3L11.8 8.4M4.0 9.3L1.7 16.5M4.0 9.3L8.9 16.7M11.8 8.4L23.6 9.3M11.8 8.4L8.9 16.7M11.8 8.4L17.5 16.6M23.6 9.3L31.8 8.3M23.6 9.3L17.5 16.6M23.6 9.3L25.5 16.4M31.8 8.3L39.0 8.8M31.8 8.3L25.5 16.4M31.8 8.3L34.3 16.3M39.0 8.8L48.8 8.6M39.0 8.8L34.3 16.3M39.0 8.8L43.9 14.9M48.8 8.6L58.0 9.3M48.8 8.6L43.9 14.9M48.8 8.6L55.7 16.5M58.0 9.3L65.8 8.4M58.0 9.3L55.7 16.5M58.0 9.3L62.9 16.7M-10.1 14.9L1.7 16.5M-10.1 14.9L-3.0 24.5M-10.1 14.9L-13.6 23.1M1.7 16.5L8.9 16.7M1.7 16.5L5.2 24.3M1.7 16.5L-3.0 24.5M8.9 16.7L17.5 16.6M8.9 16.7L12.8 25.6M8.9 16.7L5.2 24.3M17.5 16.6L25.5 16.4M17.5 16.6L23.9 25.2M17.5 16.6L12.8 25.6M25.5 16.4L34.3 16.3M25.5 16.4L33.3 25.2M25.5 16.4L23.9 25.2M34.3 16.3L43.9 14.9M34.3 16.3L40.4 23.1M34.3 16.3L33.3 25.2M43.9 14.9L55.7 16.5M43.9 14.9L51.0 24.5M43.9 14.9L40.4 23.1M55.7 16.5L62.9 16.7M55.7 16.5L59.2 24.3M55.7 16.5L51.0 24.5M-3.0 24.5L5.2 24.3M-3.0 24.5L-9.2 33.3M-3.0 24.5L-1.3 30.5M5.2 24.3L12.8 25.6M5.2 24.3L-1.3 30.5M5.2 24.3L7.5 32.1M12.8 25.6L23.9 25.2M12.8 25.6L7.5 32.1M12.8 25.6L17.7 32.9M23.9 25.2L33.3 25.2M23.9 25.2L17.7 32.9M23.9 25.2L27.8 31.6M33.3 25.2L40.4 23.1M33.3 25.2L27.8 31.6M33.3 25.2L36.7 32.0M40.4 23.1L51.0 24.5M40.4 23.1L36.7 32.0M40.4 23.1L44.8 33.3M51.0 24.5L59.2 24.3M51.0 24.5L44.8 33.3M51.0 24.5L52.7 30.5M59.2 24.3L66.8 25.6M59.2 24.3L52.7 30.5M59.2 24.3L61.5 32.1M-9.2 33.3L-1.3 30.5M-9.2 33.3L-5.1 40.5M-9.2 33.3L-13.1 41.3M-1.3 30.5L7.5 32.1M-1.3 30.5L2.8 41.3M-1.3 30.5L-5.1 40.5M7.5 32.1L17.7 32.9M7.5 32.1L14.4 41.3M7.5 32.1L2.8 41.3M17.7 32.9L27.8 31.6M17.7 32.9L23.8 40.2M17.7 32.9L14.4 41.3M27.8 31.6L36.7 32.0M27.8 31.6L32.3 40.3M27.8 31.6L23.8 40.2M36.7 32.0L44.8 33.3M36.7 32.0L40.9 41.3M36.7 32.0L32.3 40.3M44.8 33.3L52.7 30.5M44.8 33.3L48.9 40.5M44.8 33.3L40.9 41.3M52.7 30.5L61.5 32.1M52.7 30.5L56.8 41.3M52.7 30.5L48.9 40.5M-5.1 40.5L2.8 41.3M-5.1 40.5L-9.9 46.4M-5.1 40.5L0.3 46.8M2.8 41.3L14.4 41.3M2.8 41.3L0.3 46.8M2.8 41.3L9.7 49.5M14.4 41.3L23.8 40.2M14.4 41.3L9.7 49.5M14.4 41.3L18.9 48.7M23.8 40.2L32.3 40.3M23.8 40.2L18.9 48.7M23.8 40.2L27.4 47.6M32.3 40.3L40.9 41.3M32.3 40.3L27.4 47.6M32.3 40.3L35.8 49.1M40.9 41.3L48.9 40.5M40.9 41.3L35.8 49.1M40.9 41.3L44.1 46.4M48.9 40.5L56.8 41.3M48.9 40.5L44.1 46.4M48.9 40.5L54.3 46.8M56.8 41.3L68.4 41.3M56.8 41.3L54.3 46.8M56.8 41.3L63.7 49.5M-9.9 46.4L0.3 46.8M-9.9 46.4L-5.2 56.6M-9.9 46.4L-15.0 56.8M0.3 46.8L9.7 49.5M0.3 46.8L4.0 57.3M0.3 46.8L-5.2 56.6M9.7 49.5L18.9 48.7M9.7 49.5L11.8 56.4M9.7 49.5L4.0 57.3M18.9 48.7L27.4 47.6M18.9 48.7L23.6 57.3M18.9 48.7L11.8 56.4M27.4 47.6L35.8 49.1M27.4 47.6L31.8 56.3M27.4 47.6L23.6 57.3M35.8 49.1L44.1 46.4M35.8 49.1L39.0 56.8M35.8 49.1L31.8 56.3M44.1 46.4L54.3 46.8M44.1 46.4L48.8 56.6M44.1 46.4L39.0 56.8M54.3 46.8L63.7 49.5M54.3 46.8L58.0 57.3M54.3 46.8L48.8 56.6" stroke="#000" stroke-width="1.05" fill="none"/><path d="M-6.5 -7.5a1.4 1.4 0 1 0 2.8 0a1.4 1.4 0 1 0 -2.8 0M1.4 -6.7a1.4 1.4 0 1 0 2.8 0a1.4 1.4 0 1 0 -2.8 0M13.0 -6.7a1.4 1.4 0 1 0 2.8 0a1.4 1.4 0 1 0 -2.8 0M22.4 -7.8a1.4 1.4 0 1 0 2.8 0a1.4 1.4 0 1 0 -2.8 0M30.9 -7.7a1.4 1.4 0 1 0 2.8 0a1.4 1.4 0 1 0 -2.8 0M39.5 -6.7a1.4 1.4 0 1 0 2.8 0a1.4 1.4 0 1 0 -2.8 0M47.5 -7.5a1.4 1.4 0 1 0 2.8 0a1.4 1.4 0 1 0 -2.8 0M55.4 -6.7a1.4 1.4 0 1 0 2.8 0a1.4 1.4 0 1 0 -2.8 0M-11.3 -1.6a1.4 1.4 0 1 0 2.8 0a1.4 1.4 0 1 0 -2.8 0M-1.1 -1.2a1.4 1.4 0 1 0 2.8 0a1.4 1.4 0 1 0 -2.8 0M8.3 1.5a1.4 1.4 0 1 0 2.8 0a1.4 1.4 0 1 0 -2.8 0M17.5 0.7a1.4 1.4 0 1 0 2.8 0a1.4 1.4 0 1 0 -2.8 0M26.0 -0.4a1.4 1.4 0 1 0 2.8 0a1.4 1.4 0 1 0 -2.8 0M34.4 1.1a1.4 1.4 0 1 0 2.8 0a1.4 1.4 0 1 0 -2.8 0M42.7 -1.6a1.4 1.4 0 1 0 2.8 0a1.4 1.4 0 1 0 -2.8 0M52.9 -1.2a1.4 1.4 0 1 0 2.8 0a1.4 1.4 0 1 0 -2.8 0M-6.6 8.6a1.4 1.4 0 1 0 2.8 0a1.4 1.4 0 1 0 -2.8 0M2.6 9.3a1.4 1.4 0 1 0 2.8 0a1.4 1.4 0 1 0 -2.8 0M10.4 8.4a1.4 1.4 0 1 0 2.8 0a1.4 1.4 0 1 0 -2.8 0M22.2 9.3a1.4 1.4 0 1 0 2.8 0a1.4 1.4 0 1 0 -2.8 0M30.4 8.3a1.4 1.4 0 1 0 2.8 0a1.4 1.4 0 1 0 -2.8 0M37.6 8.8a1.4 1.4 0 1 0 2.8 0a1.4 1.4 0 1 0 -2.8 0M47.4 8.6a1.4 1.4 0 1 0 2.8 0a1.4 1.4 0 1 0 -2.8 0M56.6 9.3a1.4 1.4 0 1 0 2.8 0a1.4 1.4 0 1 0 -2.8 0M-11.5 14.9a1.4 1.4 0 1 0 2.8 0a1.4 1.4 0 1 0 -2.8 0M0.3 16.5a1.4 1.4 0 1 0 2.8 0a1.4 1.4 0 1 0 -2.8 0M7.5 16.7a1.4 1.4 0 1 0 2.8 0a1.4 1.4 0 1 0 -2.8 0M16.1 16.6a1.4 1.4 0 1 0 2.8 0a1.4 1.4 0 1 0 -2.8 0M24.1 16.4a1.4 1.4 0 1 0 2.8 0a1.4 1.4 0 1 0 -2.8 0M32.9 16.3a1.4 1.4 0 1 0 2.8 0a1.4 1.4 0 1 0 -2.8 0M42.5 14.9a1.4 1.4 0 1 0 2.8 0a1.4 1.4 0 1 0 -2.8 0M54.3 16.5a1.4 1.4 0 1 0 2.8 0a1.4 1.4 0 1 0 -2.8 0M-4.4 24.5a1.4 1.4 0 1 0 2.8 0a1.4 1.4 0 1 0 -2.8 0M3.8 24.3a1.4 1.4 0 1 0 2.8 0a1.4 1.4 0 1 0 -2.8 0M11.4 25.6a1.4 1.4 0 1 0 2.8 0a1.4 1.4 0 1 0 -2.8 0M22.5 25.2a1.4 1.4 0 1 0 2.8 0a1.4 1.4 0 1 0 -2.8 0M31.9 25.2a1.4 1.4 0 1 0 2.8 0a1.4 1.4 0 1 0 -2.8 0M39.0 23.1a1.4 1.4 0 1 0 2.8 0a1.4 1.4 0 1 0 -2.8 0M49.6 24.5a1.4 1.4 0 1 0 2.8 0a1.4 1.4 0 1 0 -2.8 0M57.8 24.3a1.4 1.4 0 1 0 2.8 0a1.4 1.4 0 1 0 -2.8 0M-10.6 33.3a1.4 1.4 0 1 0 2.8 0a1.4 1.4 0 1 0 -2.8 0M-2.7 30.5a1.4 1.4 0 1 0 2.8 0a1.4 1.4 0 1 0 -2.8 0M6.1 32.1a1.4 1.4 0 1 0 2.8 0a1.4 1.4 0 1 0 -2.8 0M16.3 32.9a1.4 1.4 0 1 0 2.8 0a1.4 1.4 0 1 0 -2.8 0M26.4 31.6a1.4 1.4 0 1 0 2.8 0a1.4 1.4 0 1 0 -2.8 0M35.3 32.0a1.4 1.4 0 1 0 2.8 0a1.4 1.4 0 1 0 -2.8 0M43.4 33.3a1.4 1.4 0 1 0 2.8 0a1.4 1.4 0 1 0 -2.8 0M51.3 30.5a1.4 1.4 0 1 0 2.8 0a1.4 1.4 0 1 0 -2.8 0M-6.5 40.5a1.4 1.4 0 1 0 2.8 0a1.4 1.4 0 1 0 -2.8 0M1.4 41.3a1.4 1.4 0 1 0 2.8 0a1.4 1.4 0 1 0 -2.8 0M13.0 41.3a1.4 1.4 0 1 0 2.8 0a1.4 1.4 0 1 0 -2.8 0M22.4 40.2a1.4 1.4 0 1 0 2.8 0a1.4 1.4 0 1 0 -2.8 0M30.9 40.3a1.4 1.4 0 1 0 2.8 0a1.4 1.4 0 1 0 -2.8 0M39.5 41.3a1.4 1.4 0 1 0 2.8 0a1.4 1.4 0 1 0 -2.8 0M47.5 40.5a1.4 1.4 0 1 0 2.8 0a1.4 1.4 0 1 0 -2.8 0M55.4 41.3a1.4 1.4 0 1 0 2.8 0a1.4 1.4 0 1 0 -2.8 0M-11.3 46.4a1.4 1.4 0 1 0 2.8 0a1.4 1.4 0 1 0 -2.8 0M-1.1 46.8a1.4 1.4 0 1 0 2.8 0a1.4 1.4 0 1 0 -2.8 0M8.3 49.5a1.4 1.4 0 1 0 2.8 0a1.4 1.4 0 1 0 -2.8 0M17.5 48.7a1.4 1.4 0 1 0 2.8 0a1.4 1.4 0 1 0 -2.8 0M26.0 47.6a1.4 1.4 0 1 0 2.8 0a1.4 1.4 0 1 0 -2.8 0M34.4 49.1a1.4 1.4 0 1 0 2.8 0a1.4 1.4 0 1 0 -2.8 0M42.7 46.4a1.4 1.4 0 1 0 2.8 0a1.4 1.4 0 1 0 -2.8 0M52.9 46.8a1.4 1.4 0 1 0 2.8 0a1.4 1.4 0 1 0 -2.8 0" fill="#000"/></pattern>
 <filter id="bl" x="-20%" y="-20%" width="140%" height="140%"><feGaussianBlur stdDeviation="2.5"/></filter>
 <filter id="bl2" x="-20%" y="-20%" width="140%" height="140%"><feGaussianBlur stdDeviation="1.2"/></filter>
 <clipPath id="cLF"><path d="M190 209L213 213L206 350L202 440L198 560L198 697L177 716L177.5 560L184.6 440L187 330Z"/></clipPath>
 <clipPath id="cUF"><path d="M212 212L344 231L344 358L206 342L209 280Z"/></clipPath>
 <clipPath id="cRF"><path d="M343 236L386 200L388 352L372 380L357 568L372 600L371.5 703L329 738L328 717L332 572L344 374L344 358Z"/></clipPath>
 <clipPath id="cMF"><path d="M206 355L344 376L332 574L197 558Z"/></clipPath>
 <clipPath id="cLF2"><path d="M197 576L329 594L329 718L198 698Z"/></clipPath>
 <clipPath id="cTZ"><path d="M369 386L403 391L387 571L356 569Z"/></clipPath>
 <clipPath id="cBW"><path d="M402 391L560 433.6L615 452L634.5 437.4L607 652L587 668L528 650L497 634L455 623L413 614L388 611L386 570Z"/></clipPath>
 <clipPath id="cTF"><path d="M357 374L391 346L439 361L500 388L599 406L651 421.5L634.5 437.4L615 452L560 433.6L402 391L369 386Z"/></clipPath>
 <clipPath id="cBF"><path d="M337 593L367 567L386 570L400 594L455 609L497 622L528 638L587 655L607 652L608 636L622 638L587 668L528 650L497 634L455 623L413 614L388 611L372 606.5Z"/></clipPath>
</defs>

<!-- top plate -->
<path d="M176 205L219 170L387 198L344 233Z" fill="#9ecbf7" stroke="#7f8f9f" stroke-width=".6"/>
<path d="M191 209L233 177L233 197L212 213Z" fill="#1838c8"/>
<path d="M212 197L362 218L343 236L212 213Z" fill="#6a9a78"/>
<path d="M212 197L362 218L343 236L212 213Z" fill="url(#meshs)" opacity=".45"/>

<path d="M176 717L219 682L386 710L343 745Z" fill="#9ecbf7" stroke="#7f8f9f" stroke-width=".6"/>
<path d="M177 716L190 209L212 213L344 231L386 200L388 356L372 600L371.5 703L329 738L329 718L198 698Z" fill="#203040"/>
<!-- left flange -->
<g clip-path="url(#cLF)">
 <rect x="170" y="200" width="50" height="520" fill="#1430b8"/>
 <g filter="url(#bl)">
  <path d="M170 282L220 292L220 318L170 308Z" fill="#0a9ab8"/>
  <path d="M170 306L220 314L220 328L170 322Z" fill="#0a8a50"/>
  <path d="M170 320L220 326L220 430L170 430Z" fill="#e08a10"/>
  <path d="M170 320L220 326L220 345L170 340Z" fill="#c8b000"/>
  <ellipse cx="192" cy="448" rx="9" ry="24" fill="#0aa6c8"/>
  <ellipse cx="193" cy="450" rx="4" ry="14" fill="#1a60e0"/>
  <rect x="170" y="472" width="50" height="20" fill="#c8b400"/>
  <rect x="170" y="488" width="50" height="95" fill="#ea7a08"/>
  <rect x="170" y="555" width="50" height="25" fill="#e07010"/>
  <path d="M170 580L220 570L220 600L170 612Z" fill="#0a9a70"/>
  <path d="M170 600L220 595L220 650L170 655Z" fill="#10a8c8"/>
  <rect x="170" y="648" width="50" height="22" fill="#1a60d8"/>
 </g>
 <rect x="170" y="200" width="50" height="520" fill="url(#meshs)" opacity=".75"/>
</g>

<!-- upper front face -->
<g clip-path="url(#cUF)">
 <rect x="200" y="200" width="150" height="165" fill="#f2de00"/>
 <g filter="url(#bl2)">
  <path d="M245 205L306 215L308 266L330 270L350 272L350 365L338 360L330 330L318 296L305 276L285 265L245 259Z" fill="#f59800"/>
  <ellipse cx="340" cy="322" rx="6" ry="12" fill="#ff5a00"/>
  <path d="M212 311L229 302L260 297L285 305L303 320L320 341L334 360L212 360Z" fill="#0a8a30"/>
  <path d="M212 326L240 314L270 318L290 335L305 360L212 360Z" fill="#10c0d0"/>
  <ellipse cx="235" cy="331" rx="17" ry="5" fill="#1a40f0"/>
 </g>
 <rect x="200" y="200" width="150" height="165" fill="url(#meshb)" opacity=".8"/>
</g>
<!-- right flange -->
<g clip-path="url(#cRF)">
 <rect x="325" y="195" width="70" height="550" fill="#1430b8"/>
 <g filter="url(#bl)">
  <path d="M330 262L395 222L395 262L330 302Z" fill="#0a9ec0"/>
  <path d="M330 296L395 256L395 286L330 326Z" fill="#0a8a60"/>
  <path d="M330 320L395 280L395 420L330 420Z" fill="#c0a800"/>
  <path d="M362 300L390 288L390 322L365 330Z" fill="#d88010"/>
  <path d="M360 334L395 312L395 322L360 344Z" fill="#108a50"/>
  <ellipse cx="352" cy="340" rx="9" ry="6" fill="#0a8a80"/>
  <path d="M330 352L395 330L395 440L330 440Z" fill="#d87010"/>
  <path d="M340 430L372 400L372 470L345 530L338 500Z" fill="#10a8c8"/>
  <ellipse cx="356" cy="462" rx="5" ry="22" fill="#1a50e0"/>
  <path d="M330 520L372 490L372 600L330 590Z" fill="#e07810"/>
  <rect x="325" y="596" width="70" height="60" fill="#10a0b8"/>
  <path d="M346 598L358 598L356 650L348 650Z" fill="#b8a010"/>
  <rect x="325" y="650" width="70" height="30" fill="#1a60d8"/>
 </g>
 <path d="M363 218L363 440L348 720" stroke="#7a5a10" stroke-width="1" stroke-dasharray="2 1.5" fill="none"/>
 <rect x="325" y="195" width="70" height="550" fill="url(#meshs)" opacity=".8"/>
</g>

<!-- middle face -->
<g clip-path="url(#cMF)">
 <rect x="190" y="350" width="160" height="230" fill="#ff6a00"/>
 <g filter="url(#bl2)">
  <path d="M197 543L334 558L334 580L197 565Z" fill="#f0cc00"/>
  <path d="M197 556L334 570L334 580L197 565Z" fill="#10a070"/>
  <path d="M198 552L222 556L212 562Z" fill="#10b8d0"/>
 </g>
 <rect x="190" y="350" width="160" height="230" fill="url(#mesh)" opacity=".8"/>
</g>
<!-- upper continuity plate -->
<path d="M201 354L214 338L344 358L344 377Z" fill="#0e7a70"/>
<g filter="url(#bl2)"><path d="M290 350L344 358L344 372L290 364Z" fill="#a09010"/><path d="M214 340L240 343L236 347L214 345Z" fill="#d0c000"/></g>
<path d="M275 365L344 371L344 378L275 370Z" fill="#b06010"/>
<path d="M201 354L214 338L344 358L344 378L275 370Z" fill="url(#meshs)" opacity=".7"/>

<!-- lower front face -->
<g clip-path="url(#cLF2)">
 <rect x="190" y="570" width="150" height="155" fill="#f2de00"/>
 <g filter="url(#bl2)">
  <path d="M196 586L226 594L242 618L289 655L292 722L232 710L215 665L198 630Z" fill="#f59800"/>
  <path d="M306 596L330 598L330 650L314 636Z" fill="#f59800"/>
  <path d="M215 578L230 590L248 602L280 606L300 592L306 580L215 575Z" fill="#0a8a30"/>
  <ellipse cx="262" cy="585" rx="30" ry="11" fill="#10c0c8"/>
 </g>
 <rect x="190" y="570" width="150" height="155" fill="url(#meshb)" opacity=".8"/>
</g>
<!-- lower continuity plate -->
<path d="M184 571L198 557L332 573L329 593Z" fill="#108878"/>
<path d="M260 575L332 573L329 593L260 583Z" fill="#b08a10" filter="url(#bl2)"/>
<path d="M184 571L198 557L332 573L329 593Z" fill="url(#meshs)" opacity=".7"/>
<path d="M357 374L391 346L439 361L500 388L599 406L651 421.5L634.5 437.4L608 636L622 638L587 668L528 650L497 634L455 623L413 614L388 611L372 606.5L337 593L356 569L369 386Z" fill="#4a0000"/>
<!-- T zone -->
<g clip-path="url(#cTZ)">
 <rect x="350" y="380" width="60" height="200" fill="#f0d800"/>
 <g filter="url(#bl2)">
  <path d="M384 386L405 390L403 428L388 418Z" fill="#10b0e0"/>
  <path d="M393 389L404 391L403 414L396 405Z" fill="#1a50f0"/>
  <path d="M370 418L396 420L404 432L404 446L386 448L384 512L390 520L390 562L372 556L368 470Z" fill="#0a9a60"/>
  <path d="M374 425L390 426L392 436L378 440Z" fill="#10a8a0"/>
  <path d="M378 452L404 452L404 510L380 512Z" fill="#10c0d8"/>
  <ellipse cx="392" cy="480" rx="9" ry="8" fill="#1a50f0"/>
  <path d="M386 544L396 540L394 572L380 572Z" fill="#1a50f0"/>
  <path d="M356 508L366 508L364 572L356 572Z" fill="#f0a000"/>
 </g>
 <circle cx="384" cy="423" r="1.5" fill="#666"/><circle cx="380" cy="459" r="1.5" fill="#666"/><circle cx="376" cy="495" r="1.5" fill="#666"/><circle cx="372" cy="531" r="1.5" fill="#666"/>
 <rect x="350" y="380" width="60" height="200" fill="url(#mesh)" opacity=".8"/>
</g>
<!-- beam web -->
<g clip-path="url(#cBW)">
 <rect x="380" y="385" width="260" height="290" fill="#8a0000"/>
 <g filter="url(#bl2)">
  <ellipse cx="640" cy="505" rx="107" ry="102" fill="#e62000"/>
  <ellipse cx="640" cy="503" rx="82" ry="80" fill="#f87000"/>
  <ellipse cx="642" cy="490" rx="70" ry="64" fill="#f0d800"/>
  <ellipse cx="648" cy="485" rx="42" ry="48" fill="#b8d400"/>
  <ellipse cx="622" cy="491" rx="8" ry="13" fill="#0a8a3a"/>
  <path d="M380 444C420 449 455 464 478 490C485 505 490 520 502 533C470 532 430 524 380 522Z" fill="#ff2a00"/>
  <path d="M380 451C420 456 452 469 472 492C478 502 479 511 484 518C455 519 425 515 380 513Z" fill="#f0d400"/>
  <path d="M380 459C418 463 448 474 466 494L472 508C450 509 420 508 380 507Z" fill="#0a9a40"/>
  <path d="M380 465C415 469 442 479 460 496L464 503C440 504 420 503 380 502Z" fill="#10c4e0"/>
  <ellipse cx="396" cy="482" rx="10" ry="7" fill="#1a50f0"/>
  <ellipse cx="436" cy="491" rx="6" ry="3" fill="#1a60f0"/>
  <ellipse cx="448" cy="486" rx="6" ry="3" fill="#1a60f0"/>
 </g>
 <rect x="380" y="385" width="260" height="290" fill="url(#meshb)" opacity=".8"/>
</g>
<!-- yellow block -->
<path d="M476 482L497 484L497 509L476 507Z" fill="#ffff00"/>
<path d="M497 484L502 480L502 505L497 509Z" fill="#c8c800"/>
<path d="M476 482L481 478L502 480L497 484Z" fill="#ffff90"/>

<!-- top flange -->
<g clip-path="url(#cTF)">
 <rect x="350" y="340" width="310" height="120" fill="#7a0000"/>
 <g filter="url(#bl2)">
  <path d="M560 400L651 421L615 452L560 434Z" fill="#c82800"/>
  <path d="M600 410L651 421L634 437Z" fill="#e06000"/>
  <ellipse cx="598" cy="408" rx="12" ry="3" fill="#d8b000"/>
  <ellipse cx="568" cy="436" rx="9" ry="2.5" fill="#d8c000"/>
  <ellipse cx="608" cy="433" rx="7" ry="2" fill="#d8c000"/>
 </g>
 <rect x="350" y="340" width="310" height="120" fill="url(#meshs)" opacity=".8"/>
</g>
<!-- bottom flange -->
<g clip-path="url(#cBF)">
 <rect x="335" y="560" width="300" height="115" fill="#780000"/>
 <g filter="url(#bl2)">
  <path d="M606 636L622 638L598 662L596 650Z" fill="#d07000"/>
  <ellipse cx="540" cy="652" rx="12" ry="4" fill="#c8a000"/>
  <ellipse cx="362" cy="577" rx="10" ry="3" fill="#f0c000"/>
 </g>
 <rect x="335" y="560" width="300" height="115" fill="url(#meshs)" opacity=".8"/>
</g>

<!-- loads -->
<path d="M786 484.7A56 58.6 0 0 1 791 601" fill="none" stroke="#2a8a2a" stroke-width="1.5"/>
<path d="M785 601L797 595.5L795 607Z" fill="#2a8a2a"/>
<path d="M786 550V648" stroke="#4444ee" stroke-width="1.7"/>
<path d="M780 646L792 646L786 657Z" fill="#2a2ae8"/>
<path d="M778 538L784 534L794 535L794 548L788 551L778 550Z" fill="#e2e2e2" stroke="#9a9a9a" stroke-width=".8"/>
<path d="M778 538L788 539L794 535M788 539V551" fill="none" stroke="#9a9a9a" stroke-width=".8"/>
<text x="741" y="602" font-family="Liberation Sans" font-size="14.5" letter-spacing=".35" fill="#3a8f3a">1685 kN·m</text>
<text x="762" y="669" font-family="Liberation Sans" font-size="14.5" letter-spacing=".5" fill="#4040e8">751 kN</text>
<!-- axes -->
<path d="M22 755V730" stroke="#1a2ae0" stroke-width="1.6"/><path d="M19 733L22 723L25 733Z" fill="#1a2ae0"/>
<path d="M22 755L47 760" stroke="#d81818" stroke-width="1.6"/><path d="M45 756L53 760.5L45 763.5Z" fill="#d81818"/>
<path d="M22 755L33 746" stroke="#28c028" stroke-width="1.6"/><ellipse cx="33" cy="746" rx="3" ry="2" fill="#20a020" transform="rotate(-35 33 746)"/>
<text x="18" y="719.5" font-family="Liberation Sans" font-size="11" font-weight="bold" fill="#1a2ae0">Z</text>
<text x="36" y="745" font-family="Liberation Sans" font-size="11" font-weight="bold" fill="#30c830">Y</text>
<text x="57" y="766" font-family="Liberation Sans" font-size="11" font-weight="bold" fill="#e01010">X</text>
</svg><!--/MODEL-->
<div id="legend" class="a"><div class="a" style="left:52.1px;top:0;width:52.6px;height:19px;background:#4a0a7a"></div><div class="a" style="left:104.2px;top:0;width:52.6px;height:19px;background:#2a00c8"></div><div class="a" style="left:156.4px;top:0;width:52.6px;height:19px;background:#0020ff"></div><div class="a" style="left:208.5px;top:0;width:52.6px;height:19px;background:#0072f2"></div><div class="a" style="left:260.6px;top:0;width:52.6px;height:19px;background:#00d2fa"></div><div class="a" style="left:312.7px;top:0;width:52.6px;height:19px;background:#00dcc8"></div><div class="a" style="left:364.8px;top:0;width:52.6px;height:19px;background:#009682"></div><div class="a" style="left:416.9px;top:0;width:52.6px;height:19px;background:#006e28"></div><div class="a" style="left:469.1px;top:0;width:52.6px;height:19px;background:#b4d800"></div><div class="a" style="left:521.2px;top:0;width:52.6px;height:19px;background:#ffe800"></div><div class="a" style="left:573.3px;top:0;width:52.6px;height:19px;background:#f8a800"></div><div class="a" style="left:625.4px;top:0;width:52.6px;height:19px;background:#ff6a00"></div><div class="a" style="left:677.5px;top:0;width:52.6px;height:19px;background:#ff2a00"></div><div class="a" style="left:729.6px;top:0;width:52.6px;height:19px;background:#d00000"></div><div class="a" style="left:781.8px;top:0;width:52.6px;height:19px;background:#780000"></div><div class="t lg" style="left:52.1px;color:#fff">1.88</div><div class="t lg" style="left:104.2px;color:#fff">21.76</div><div class="t lg" style="left:156.4px;color:#fff">41.63</div><div class="t lg" style="left:208.5px;color:#fff">61.51</div><div class="t lg" style="left:260.6px;color:#111">81.38</div><div class="t lg" style="left:312.7px;color:#111">101.26</div><div class="t lg" style="left:364.8px;color:#fff">121.13</div><div class="t lg" style="left:416.9px;color:#fff">141</div><div class="t lg" style="left:469.1px;color:#111">160.88</div><div class="t lg" style="left:521.2px;color:#111">180.75</div><div class="t lg" style="left:573.3px;color:#111">200.63</div><div class="t lg" style="left:625.4px;color:#fff">220.5</div><div class="t lg" style="left:677.5px;color:#fff">240.38</div><div class="t lg" style="left:729.6px;color:#fff">260.25</div><div class="t lg" style="left:781.8px;color:#fff">280.13</div><div class="t lg" style="left:827px;color:#fff;transform:none">300 MPa</div></div>
<div id="bottom" class="a"></div>
<div class="a" style="left:886px;top:132px;width:650px;height:662px;background:#f3f3f3"></div>
<div class="a" style="left:887px;top:459px;width:3px;height:10px;border-left:1px dotted #999"></div>
<div class="a" style="left:893px;top:134px;width:641px;height:50px;background:#fff;border:1px solid #dadada"></div>
<div class="a" style="left:902px;top:144px;width:622px;height:27px;background:#fff;border:1px solid #a8a8a8;border-radius:2px"></div>
<svg class="a" style="left:910px;top:148px" width="26" height="20" viewBox="0 0 26 20">
 <rect x="1" y="1" width="9" height="18" fill="#cfdcec"/><path d="M1.5 1v18M10 1v18" stroke="#3d6ea5" stroke-width="1.4"/><path d="M2 5h8M2 15h8" stroke="#8fb0d4"/>
 <path d="M11 3h14M11 15.5h14" stroke="#3d6ea5" stroke-width="1.6"/><path d="M13 4q3 5.5 0 11h10q-3-5.5 0-11z" fill="#a9c1dd"/><path d="M14 4v12M16 4v12" stroke="#3d6ea5" stroke-width=".8" stroke-dasharray="1 1"/>
</svg>
<div class="t tx" style="left:939px;top:153px;color:#222">Prequalified connections</div>
<div class="chev" style="left:1513px;top:153px;width:5px;height:5px;border-color:#666"></div>
<div class="a" style="left:893px;top:192px;width:641px;height:600px;background:#fcfcfc;border:1px solid #dadada"></div>
<div class="a" style="left:893px;top:192px;width:641px;height:15px;background:#d9d9d9"></div>
<div class="t tx" style="left:898px;top:196px;color:#333">Checks</div>
<div class="a" style="left:902px;top:217px;width:11px;height:11px;background:#fff;border:1px solid #555;border-radius:2px"></div>
<div class="t tx" style="left:916px;top:218px;color:#222">Only show the failed checks</div>
<div class="a" style="left:900px;top:238px;width:627px;height:184px;background:#fff;border:1px solid #d9d9d9;overflow:hidden">
 <div class="a" style="left:0;top:0;width:610px;height:18.5px;background:#f3f3f3;border-bottom:1px solid #e3e3e3"></div>
 <div class="a" style="left:45px;top:3px;width:1px;height:14px;background:#e0e0e0"></div>
 <div class="a" style="left:110px;top:3px;width:1px;height:14px;background:#e0e0e0"></div>
 <div class="t tx" style="left:6px;top:5px">Element</div>
 <div class="t tx" style="left:51px;top:5px">D/C ratio (%)</div>
 <div class="t tx" style="left:116px;top:4.4px">Code checks</div>
 <div class="a" style="left:0;top:18.5px;width:610px;height:17.6px;background:#f7f9f9"></div>
<div class="t tx" style="left:6px;top:21.9px">RBS1</div>
<div class="t tx" style="right:522px;top:21.9px;transform-origin:100% 0">--</div>
<div class="t tx" style="left:116px;top:21.9px">Beam flange-to-column flange weld limitations (AISC 358-22, 5.4)</div>
<div class="a" style="left:0;top:36.1px;width:610px;height:17.6px;background:#ffffff"></div>
<div class="t tx" style="left:6px;top:39.5px">RBS1</div>
<div class="t tx" style="right:522px;top:39.5px;transform-origin:100% 0">--</div>
<div class="t tx" style="left:116px;top:39.5px">Beam web-to-column flange connection limitations (AISC 358-22, 5.5)</div>
<div class="a" style="left:0;top:53.7px;width:610px;height:17.6px;background:#f7f9f9"></div>
<div class="t tx" style="left:6px;top:57.1px">RBS1</div>
<div class="t tx" style="right:522px;top:57.1px;transform-origin:100% 0">--</div>
<div class="t tx" style="left:116px;top:57.1px">Flange cuts geometry (AISC 358-22, 5.7 - 1)</div>
<div class="a" style="left:0;top:71.3px;width:610px;height:17.6px;background:#ffffff"></div>
<div class="t tx" style="left:6px;top:74.7px">RBS1</div>
<div class="t tx" style="right:522px;top:74.7px;transform-origin:100% 0">--</div>
<div class="t tx" style="left:116px;top:74.7px">Probable maximum moment at the face of the column (AISC 358-22, 5.7)</div>
<div class="a" style="left:0;top:88.9px;width:610px;height:17.6px;background:#f7f9f9"></div>
<div class="t tx" style="left:6px;top:92.3px">RBS1</div>
<div class="t tx" style="right:522px;top:92.3px;transform-origin:100% 0">95.26</div>
<div class="t tx" style="left:116px;top:92.3px">Flexural strength of the beam at the face of the column (AISC 358-22, 5.7 - 8)</div>
<div class="a" style="left:0;top:106.5px;width:610px;height:17.6px;background:#ffffff"></div>
<div class="t tx" style="left:6px;top:109.9px">RBS1</div>
<div class="t tx" style="right:522px;top:109.9px;transform-origin:100% 0">80.84</div>
<div class="t tx" style="left:116px;top:109.9px">Beam shear strength (AISC 358-22, 5.7 - 9)</div>
<div class="a" style="left:0;top:124.1px;width:46px;height:17px;background:#e5e5e5"></div>
<div class="a" style="left:46px;top:124.1px;width:65px;height:17px;background:#e5e5e5"></div>
<div class="a" style="left:111px;top:124.1px;width:499px;height:17px;background:#d9d9d9;border:1px dotted #555"></div>
<div class="t tx" style="left:6px;top:127.5px">RBS1</div>
<div class="t tx" style="right:522px;top:127.5px;transform-origin:100% 0">66.61</div>
<div class="t tx" style="left:116px;top:127.5px">Continuity plates strength (AISC 358-22, 2.6 - AISC 341-22, E3.6f)</div>
<div class="a" style="left:0;top:141.7px;width:610px;height:17.6px;background:#ffffff"></div>
<div class="t tx" style="left:6px;top:145.1px">RBS1</div>
<div class="t tx" style="right:522px;top:145.1px;transform-origin:100% 0">--</div>
<div class="t tx" style="left:116px;top:145.1px">Continuity plate width (AISC 341-22, E3.6f)</div>
<div class="a" style="left:0;top:159.3px;width:610px;height:17.6px;background:#f7f9f9"></div>
<div class="t tx" style="left:6px;top:162.7px">RBS1</div>
<div class="t tx" style="right:522px;top:162.7px;transform-origin:100% 0">--</div>
<div class="t tx" style="left:116px;top:162.7px">Continuity plate thickness (AISC 341-22, E3.6f)</div>
 <div class="a" style="left:45px;top:18px;width:1px;height:170px;background:#eef0f0"></div>
 <div class="a" style="left:110px;top:18px;width:1px;height:170px;background:#eef0f0"></div>
 <div class="a" style="left:610px;top:0;width:16px;height:184px;background:#f0f0f0"></div>
 <div class="a" style="left:1px;top:0;width:1px;height:1px"></div>
 <div class="a" style="left:617px;top:46px;width:2px;height:92px;background:#888"></div>
</div>
<div class="a" style="left:1206px;top:424px;width:14px;height:1px;border-top:1px dotted #aaa"></div>
<svg class="a" style="left:1310px;top:432px" width="19" height="17" viewBox="0 0 19 17">
 <path d="M1 6l3 10h11l3-8H7z" fill="#fff" stroke="#222" stroke-width="1.3"/><path d="M10 9V5H7l5-4 5 4h-3v4z" fill="#111"/>
</svg>
<div class="t tx" style="left:1332px;top:437px;color:#333">Share</div>
<svg class="a" style="left:1361px;top:433px" width="17" height="16" viewBox="0 0 17 16">
 <rect x="1" y="5" width="8" height="10" fill="#eee" stroke="#444"/><path d="M7 1h6l3 3v8H9" fill="#fff" stroke="#444"/><path d="M3 8h4M3 10h4M3 12h4" stroke="#888" stroke-width=".8"/><path d="M5 4V2h2" fill="none" stroke="#444"/>
</svg>
<div class="t tx" style="left:1382px;top:437px;color:#333">Export</div>
<div class="a" style="left:1411px;top:441px;border-left:2.5px solid transparent;border-right:2.5px solid transparent;border-top:3px solid #555"></div>
<svg class="a" style="left:1422px;top:433px" width="17" height="16" viewBox="0 0 17 16">
 <path d="M4 7V1h7l2 2v4" fill="#fff" stroke="#222" stroke-width="1.2"/><path d="M1 8h15v5H1z" fill="#fff" stroke="#222" stroke-width="1.4"/><path d="M2 14h13" stroke="#222" stroke-width="1.6"/>
</svg>
<div class="t tx" style="left:1443px;top:437px;color:#333">Page preview</div>
<svg class="a" style="left:1505px;top:433px" width="17" height="17" viewBox="0 0 21 21">
  <path d="M10.5 1.5l1.6 2.3 2.7-.8.4 2.8 2.7.9-1 2.6 1.9 2-2.2 1.7.6 2.8-2.8.3-1 2.6-2.5-1.3-2.3 1.6-1.3-2.5-2.8.1.3-2.8-2.4-1.5 1.6-2.3-1.3-2.5 2.7-.8.3-2.8 2.8.5z" fill="none" stroke="#444" stroke-width="1.3"/>
  <circle cx="10.5" cy="10.5" r="4" fill="none" stroke="#444" stroke-width="1.3"/>
</svg>
<div class="a" style="left:900px;top:454px;width:627px;height:330px;background:#fff;border:1px solid #d9d9d9;overflow:hidden" id="report">
 <div class="a" style="left:612px;top:0;width:14px;height:330px;background:#f0f0f0"></div>
 <div class="a" style="left:618px;top:14px;width:2px;height:13px;background:#777"></div>
 <div class="a" style="left:22px;top:29px;width:568px;height:14px;background:#c5e6bf"></div>
<div class="t rp" style="left:26.0px;top:29.0px;color:#222">Continuity plates strength (AISC 358-22, 2.6 - AISC 341-22, E3.6f)</div>
<div class="t rp f" style="left:45.0px;top:49.0px;">F<sub>su</sub> ≤ ϕP<sub>n</sub></div>
<div class="t rp b" style="right:60.0px;top:49.0px;font-size:11px;letter-spacing:.35px">1008.33 kN ≤ 1513.83 kN</div>
<svg class="a" style="left:571px;top:46px" width="16" height="16" viewBox="0 0 16 16"><path d="M1 8.5q2.5 .5 4.5 5.5q4-9 10-13.5q-1 .3-2 1q-5 3.5-8 9q-1.5-3-4.5-2z" fill="#1a8f3c" stroke="#1a8f3c" stroke-width=".9" stroke-linejoin="round"/></svg>
<div class="t rp" style="left:22.0px;top:65.0px;"><b>F<sub>su</sub></b>: Required strength of continuity or stiffener plate</div>
<div class="t rp b" style="right:144.0px;top:65.0px;">F<sub>su</sub></div>
<div class="t rp" style="left:484px;top:65.0px">:</div>
<div class="t rp i" style="left:495px;width:66px;text-align:center;top:66.0px">1008.33</div>
<div class="a" style="left:495px;top:77.0px;width:66px;height:1px;background:#8a8a8a"></div>
<div class="t rp" style="left:564px;top:65.0px">kN</div>
<div class="t rp f" style="left:45.0px;top:81.0px;">F<sub>su</sub> = F<sub>fu</sub> − min(ϕR<sub>n</sub>)</div>
<div class="t rp" style="left:45.0px;top:100.0px;"><b>min(φR<sub>n</sub>)</b>: Minimum design strength value from:</div>
<div class="t rp b" style="right:144.0px;top:100.0px;">min(φR<sub>n</sub>)</div>
<div class="t rp" style="left:484px;top:100.0px">:</div>
<div class="t rp i" style="left:495px;width:66px;text-align:center;top:101.0px">1619.50</div>
<div class="a" style="left:495px;top:112.0px;width:66px;height:1px;background:#8a8a8a"></div>
<div class="t rp" style="left:564px;top:100.0px">kN</div>
<div class="t rp" style="left:45.0px;top:114.0px;"><b>F<sub>fu</sub></b>: Factored beam flange force</div>
<div class="t rp b" style="right:144.0px;top:114.0px;">F<sub>fu</sub></div>
<div class="t rp" style="left:484px;top:114.0px">:</div>
<div class="t rp i" style="left:495px;width:66px;text-align:center;top:115.0px">2627.83</div>
<div class="a" style="left:495px;top:126.0px;width:66px;height:1px;background:#8a8a8a"></div>
<div class="t rp" style="left:564px;top:114.0px">kN</div>
<div class="t rp" style="left:22.0px;top:128.0px;"><b>φ</b>: Resistance factor</div>
<div class="t rp b" style="right:144.0px;top:128.0px;">φ</div>
<div class="t rp" style="left:484px;top:128.0px">:</div>
<div class="t rp i" style="left:495px;width:66px;text-align:center;top:129.0px">0.90</div>
<div class="a" style="left:495px;top:140.0px;width:66px;height:1px;background:#8a8a8a"></div>
<div class="t rp" style="left:22.0px;top:142.0px;"><b>P<sub>n</sub></b>: Nominal compressive strength</div>
<div class="t rp b" style="right:144.0px;top:142.0px;">P<sub>n</sub></div>
<div class="t rp" style="left:484px;top:142.0px">:</div>
<div class="t rp i" style="left:495px;width:66px;text-align:center;top:143.0px">1682.03</div>
<div class="a" style="left:495px;top:154.0px;width:66px;height:1px;background:#8a8a8a"></div>
<div class="t rp" style="left:564px;top:142.0px">kN</div>
<div class="t rp f" style="left:45.0px;top:158.0px;">P<sub>n</sub> = F<sub>y</sub> A<sub>g</sub></div>
<div class="t rp" style="left:45.0px;top:175.0px;"><b>F<sub>y</sub></b>: Specified minimum yield stress</div>
<div class="t rp b" style="right:144.0px;top:175.0px;">F<sub>y</sub></div>
<div class="t rp" style="left:484px;top:175.0px">:</div>
<div class="t rp i" style="left:495px;width:66px;text-align:center;top:176.0px">248.30</div>
<div class="a" style="left:495px;top:187.0px;width:66px;height:1px;background:#8a8a8a"></div>
<div class="t rp" style="left:564px;top:175.0px">MPa</div>
<div class="t rp" style="left:45.0px;top:189.0px;"><b>A<sub>g</sub></b>: Gross area</div>
<div class="t rp b" style="right:144.0px;top:189.0px;">A<sub>g</sub></div>
<div class="t rp" style="left:484px;top:189.0px">:</div>
<div class="t rp i" style="left:495px;width:66px;text-align:center;top:190.0px">6774.18</div>
<div class="a" style="left:495px;top:201.0px;width:66px;height:1px;background:#8a8a8a"></div>
<div class="t rp" style="left:564px;top:189.0px">mm²</div>
<div class="t rp b" style="left:22.0px;top:202.0px;">Columnflangelocalbending</div>
<div class="t rp" style="left:22.0px;top:219.5px;"><b>φ</b>: Resistance factor</div>
<div class="t rp b" style="right:144.0px;top:219.5px;">φ</div>
<div class="t rp" style="left:484px;top:219.5px">:</div>
<div class="t rp i" style="left:495px;width:66px;text-align:center;top:220.5px">0.90</div>
<div class="a" style="left:495px;top:231.5px;width:66px;height:1px;background:#8a8a8a"></div>
<div class="t rp" style="left:22.0px;top:233.0px;"><b>R<sub>n</sub></b>: Nominal strength</div>
<div class="t rp b" style="right:144.0px;top:233.0px;">R<sub>n</sub></div>
<div class="t rp" style="left:484px;top:233.0px">:</div>
<div class="t rp i" style="left:495px;width:66px;text-align:center;top:234.0px">2445.89</div>
<div class="a" style="left:495px;top:245.0px;width:66px;height:1px;background:#8a8a8a"></div>
<div class="t rp" style="left:564px;top:233.0px">kN</div>
<div class="t rp f" style="left:45.0px;top:249.0px;">R<sub>n</sub> = 6.25 F<sub>yf</sub> t<sub>f</sub><sup>2</sup></div>
<div class="t rp" style="left:45.0px;top:267.0px;"><b>F<sub>yf</sub></b>: Specified minimum yield stress</div>
<div class="t rp b" style="right:144.0px;top:267.0px;">F<sub>yf</sub></div>
<div class="t rp" style="left:484px;top:267.0px">:</div>
<div class="t rp i" style="left:495px;width:66px;text-align:center;top:268.0px">248.30</div>
<div class="a" style="left:495px;top:279.0px;width:66px;height:1px;background:#8a8a8a"></div>
<div class="t rp" style="left:564px;top:267.0px">MPa</div>
<div class="t rp" style="left:45.0px;top:281.0px;"><b>t<sub>f</sub></b>: Thickness of the loaded flange</div>
<div class="t rp b" style="right:144.0px;top:281.0px;">t<sub>f</sub></div>
<div class="t rp" style="left:484px;top:281.0px">:</div>
<div class="t rp i" style="left:495px;width:66px;text-align:center;top:282.0px">39.7</div>
<div class="a" style="left:495px;top:293.0px;width:66px;height:1px;background:#8a8a8a"></div>
<div class="t rp" style="left:564px;top:281.0px">mm</div>
<div class="t rp b" style="left:22.0px;top:295.0px;">Columnweblocalyielding</div>
<div class="t rp" style="left:22.0px;top:311.0px;"><b>φ</b>: Resistance factor</div>
<div class="t rp b" style="right:144.0px;top:311.0px;">φ</div>
<div class="t rp" style="left:484px;top:311.0px">:</div>
<div class="t rp i" style="left:495px;width:66px;text-align:center;top:312.0px">1.00</div>
<div class="a" style="left:495px;top:323.0px;width:66px;height:1px;background:#8a8a8a"></div>
<div class="t rp" style="left:22.0px;top:326.0px;"><b>R<sub>n</sub></b>: Nominal strength</div>
<div class="t rp" style="left:484px;top:326.0px">:</div>
<div class="t rp i" style="left:495px;width:66px;text-align:center;top:327.0px"></div>
<div class="a" style="left:495px;top:338.0px;width:66px;height:1px;background:#8a8a8a"></div>
</div>


<svg class="a" style="left:843px;top:753px" width="40" height="36" viewBox="0 0 40 36">
 <path d="M23 13L34 32H11z" fill="#f2c200" stroke="#f59a00" stroke-width="1.5"/><circle cx="23" cy="28" r="1.8" fill="#111"/><path d="M23 19v5" stroke="#111" stroke-width="2"/>
 <circle cx="14" cy="14" r="12" fill="#e01f1f"/><path d="M9 9l10 10M19 9L9 19" stroke="#fff" stroke-width="3"/>
</svg>
<div class="a" style="left:741px;top:800px;width:55px;height:21px;background:#fff;border:1px solid #3b7cc0;border-radius:3px"></div>
<div class="t tx" style="left:753px;top:805px;color:#222"><u>A</u>ccept</div>
</body></html>
